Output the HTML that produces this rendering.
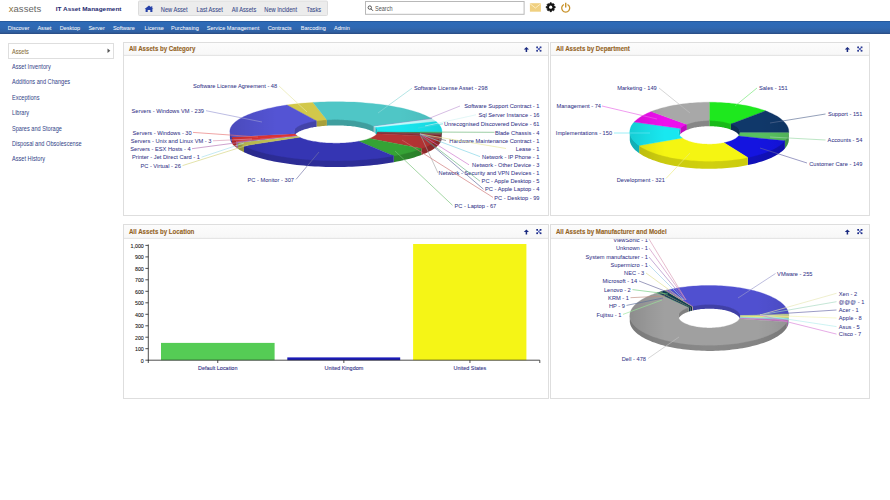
<!DOCTYPE html><html><head><meta charset="utf-8"><style>
html,body{margin:0;padding:0;background:#fff;width:890px;height:500px;overflow:hidden}
svg{display:block}
text{font-family:"Liberation Sans",sans-serif}
</style></head><body>
<svg width="890" height="500" viewBox="0 0 890 500">
<defs>
<linearGradient id="nav" x1="0" y1="0" x2="0" y2="1">
<stop offset="0" stop-color="#24508c"/><stop offset="0.1" stop-color="#2d6bb8"/><stop offset="0.5" stop-color="#2f68b2"/><stop offset="0.85" stop-color="#3060a2"/><stop offset="1" stop-color="#2a4a80"/>
</linearGradient>
<linearGradient id="hdr" x1="0" y1="0" x2="0" y2="1">
<stop offset="0" stop-color="#fcfcfc"/><stop offset="1" stop-color="#f7f7f7"/>
</linearGradient>
<linearGradient id="shG" x1="0" y1="0" x2="1" y2="0">
<stop offset="0" stop-color="#000" stop-opacity="0.12"/><stop offset="0.12" stop-color="#000" stop-opacity="0.05"/><stop offset="0.22" stop-color="#000" stop-opacity="0"/><stop offset="0.8" stop-color="#000" stop-opacity="0"/><stop offset="0.9" stop-color="#000" stop-opacity="0.03"/><stop offset="1" stop-color="#000" stop-opacity="0.08"/>
</linearGradient>
<linearGradient id="shG2" x1="0" y1="0" x2="1" y2="0">
<stop offset="0" stop-color="#000" stop-opacity="0.12"/><stop offset="0.2" stop-color="#000" stop-opacity="0.03"/><stop offset="0.5" stop-color="#000" stop-opacity="0"/><stop offset="0.8" stop-color="#000" stop-opacity="0.03"/><stop offset="1" stop-color="#000" stop-opacity="0.12"/>
</linearGradient>
</defs>

<text x="8.7" y="11.7" font-size="9.5" fill="#666" letter-spacing="0.05"><tspan fill="#8c7438">x</tspan>assets</text>
<text transform="translate(55.80,11.00) scale(1.07,1)" font-size="6.0" font-weight="bold" fill="#1e2a70" text-anchor="start" >IT Asset Management</text>
<rect x="138.5" y="1.0" width="189" height="14.5" rx="1" fill="#ececec" stroke="#dcdcdc" stroke-width="1"/>
<path d="M149,5.6 L151.2,7.3 L151.2,6.2 L152.3,6.2 L152.3,8.2 L153.4,9.1 L152.4,9.1 L152.4,11.9 L150.3,11.9 L150.3,10.0 L147.7,10.0 L147.7,11.9 L145.6,11.9 L145.6,9.1 L144.6,9.1 Z" fill="#2540a8"/>
<text transform="translate(160.80,11.80) scale(0.9,1)" font-size="6.3" font-weight="normal" fill="#3a4a8a" text-anchor="start" stroke="#3a4a8a" stroke-width="0.08" >New Asset</text>
<text transform="translate(196.60,11.80) scale(0.9,1)" font-size="6.3" font-weight="normal" fill="#3a4a8a" text-anchor="start" stroke="#3a4a8a" stroke-width="0.08" >Last Asset</text>
<text transform="translate(231.70,11.80) scale(0.9,1)" font-size="6.3" font-weight="normal" fill="#3a4a8a" text-anchor="start" stroke="#3a4a8a" stroke-width="0.08" >All Assets</text>
<text transform="translate(264.30,11.80) scale(0.9,1)" font-size="6.3" font-weight="normal" fill="#3a4a8a" text-anchor="start" stroke="#3a4a8a" stroke-width="0.08" >New Incident</text>
<text transform="translate(306.60,11.80) scale(0.9,1)" font-size="6.3" font-weight="normal" fill="#3a4a8a" text-anchor="start" stroke="#3a4a8a" stroke-width="0.08" >Tasks</text>
<rect x="365.5" y="1.5" width="158.6" height="12.8" fill="#fff" stroke="#b8b8b8" stroke-width="1"/>
<circle cx="369.8" cy="7.6" r="1.7" fill="none" stroke="#444" stroke-width="0.9"/><path d="M371,8.8 L373,10.8" stroke="#444" stroke-width="1"/>
<text transform="translate(375.00,10.80) scale(0.88,1)" font-size="6.3" font-weight="normal" fill="#555" text-anchor="start" >Search</text>
<rect x="529.9" y="3.2" width="11" height="8.5" fill="#f0d080"/><path d="M529.9,3.6 L535.4,8 L540.9,3.6" fill="none" stroke="#fff3d0" stroke-width="0.8"/>
<path d="M555.2,6.6 555.2,7.8 553.8,8.2 554.3,9.9 553.4,10.8 552.2,10.1 551.3,11.7 550.1,11.7 549.7,10.3 548.0,10.8 547.1,9.9 547.8,8.7 546.2,7.8 546.2,6.6 547.6,6.2 547.1,4.5 548.0,3.6 549.2,4.3 550.1,2.7 551.3,2.7 551.7,4.1 553.4,3.6 554.3,4.5 553.6,5.7 555.2,6.6 555.2,7.8 553.8,8.2 554.3,9.9 553.4,10.8 552.2,10.1 551.3,11.7 550.1,11.7 549.7,10.3 548.0,10.8 547.1,9.9 547.8,8.7 546.2,7.8 546.2,6.6 547.6,6.2 547.1,4.5 548.0,3.6 549.2,4.3 550.1,2.7 551.3,2.7 551.7,4.1 553.4,3.6 554.3,4.5 553.6,5.7Z" fill="#111" stroke="#111" stroke-width="0.4" stroke-linejoin="round"/><circle cx="550.7" cy="7.2" r="1.6" fill="#fff"/>
<path d="M563.9,4.5 A4,4 0 1 0 567.5,4.5" fill="none" stroke="#c8922a" stroke-width="1.3"/><path d="M565.7,2.8 L565.7,7.6" stroke="#c8922a" stroke-width="1.4"/>
<rect x="0" y="21" width="890" height="13" fill="url(#nav)"/>
<text transform="translate(7.70,29.90) scale(0.9,1)" font-size="6.2" font-weight="normal" fill="#f4f7fc" text-anchor="start" stroke="#f4f7fc" stroke-width="0.04" >Discover</text>
<text transform="translate(37.40,29.90) scale(0.9,1)" font-size="6.2" font-weight="normal" fill="#f4f7fc" text-anchor="start" stroke="#f4f7fc" stroke-width="0.04" >Asset</text>
<text transform="translate(59.70,29.90) scale(0.9,1)" font-size="6.2" font-weight="normal" fill="#f4f7fc" text-anchor="start" stroke="#f4f7fc" stroke-width="0.04" >Desktop</text>
<text transform="translate(88.40,29.90) scale(0.9,1)" font-size="6.2" font-weight="normal" fill="#f4f7fc" text-anchor="start" stroke="#f4f7fc" stroke-width="0.04" >Server</text>
<text transform="translate(112.90,29.90) scale(0.9,1)" font-size="6.2" font-weight="normal" fill="#f4f7fc" text-anchor="start" stroke="#f4f7fc" stroke-width="0.04" >Software</text>
<text transform="translate(144.60,29.90) scale(0.9,1)" font-size="6.2" font-weight="normal" fill="#f4f7fc" text-anchor="start" stroke="#f4f7fc" stroke-width="0.04" >License</text>
<text transform="translate(171.00,29.90) scale(0.9,1)" font-size="6.2" font-weight="normal" fill="#f4f7fc" text-anchor="start" stroke="#f4f7fc" stroke-width="0.04" >Purchasing</text>
<text transform="translate(206.70,29.90) scale(0.9,1)" font-size="6.2" font-weight="normal" fill="#f4f7fc" text-anchor="start" stroke="#f4f7fc" stroke-width="0.04" >Service Management</text>
<text transform="translate(267.80,29.90) scale(0.9,1)" font-size="6.2" font-weight="normal" fill="#f4f7fc" text-anchor="start" stroke="#f4f7fc" stroke-width="0.04" >Contracts</text>
<text transform="translate(300.70,29.90) scale(0.9,1)" font-size="6.2" font-weight="normal" fill="#f4f7fc" text-anchor="start" stroke="#f4f7fc" stroke-width="0.04" >Barcoding</text>
<text transform="translate(334.00,29.90) scale(0.9,1)" font-size="6.2" font-weight="normal" fill="#f4f7fc" text-anchor="start" stroke="#f4f7fc" stroke-width="0.04" >Admin</text>
<rect x="8.5" y="43.5" width="105" height="15" fill="#fff" stroke="#dedede" stroke-width="1"/>
<text transform="translate(12.00,53.70) scale(0.88,1)" font-size="6.4" font-weight="normal" fill="#8a7040" text-anchor="start" stroke="#8a7040" stroke-width="0.08" >Assets</text>
<path d="M107.5,48.6 L110.3,50.8 L107.5,53 Z" fill="#555"/>
<text transform="translate(12.00,69.00) scale(0.88,1)" font-size="6.4" font-weight="normal" fill="#334488" text-anchor="start" >Asset Inventory</text>
<text transform="translate(12.00,84.40) scale(0.88,1)" font-size="6.4" font-weight="normal" fill="#334488" text-anchor="start" >Additions and Changes</text>
<text transform="translate(12.00,99.90) scale(0.88,1)" font-size="6.4" font-weight="normal" fill="#334488" text-anchor="start" >Exceptions</text>
<text transform="translate(12.00,115.30) scale(0.88,1)" font-size="6.4" font-weight="normal" fill="#334488" text-anchor="start" >Library</text>
<text transform="translate(12.00,130.60) scale(0.88,1)" font-size="6.4" font-weight="normal" fill="#334488" text-anchor="start" >Spares and Storage</text>
<text transform="translate(12.00,145.90) scale(0.88,1)" font-size="6.4" font-weight="normal" fill="#334488" text-anchor="start" >Disposal and Obsolescense</text>
<text transform="translate(12.00,161.30) scale(0.88,1)" font-size="6.4" font-weight="normal" fill="#334488" text-anchor="start" >Asset History</text>
<rect x="123.5" y="42.5" width="425" height="173" fill="#fff" stroke="#dedede" stroke-width="1"/>
<rect x="550.5" y="42.5" width="319" height="173" fill="#fff" stroke="#dedede" stroke-width="1"/>
<rect x="123.5" y="224.5" width="425" height="174" fill="#fff" stroke="#dedede" stroke-width="1"/>
<rect x="550.5" y="224.5" width="319" height="174" fill="#fff" stroke="#dedede" stroke-width="1"/>
<path d="M441.9,130.0 441.8,131.4 441.8,138.9 441.9,137.5Z" fill="#14c3ca" /><path d="M441.8,131.4 441.6,132.3 441.6,139.8 441.8,138.9Z" fill="#236723" /><path d="M441.6,132.3 441.5,132.5 441.5,140.0 441.6,139.8Z" fill="#443636" /><path d="M441.5,132.5 441.4,132.7 441.4,140.2 441.5,140.0Z" fill="#887a44" /><path d="M441.4,132.7 441.4,133.0 441.4,140.5 441.4,140.2Z" fill="#5f445f" /><path d="M441.4,133.0 441.1,133.6 441.1,141.1 441.4,140.5Z" fill="#6c2844" /><path d="M441.1,133.6 441.0,133.9 441.0,141.4 441.1,141.1Z" fill="#6c4444" /><path d="M441.0,133.9 440.4,135.0 440.4,142.5 441.0,141.4Z" fill="#752323" /><path d="M440.4,135.0 439.8,135.9 439.8,143.4 440.4,142.5Z" fill="#5f222f" /><path d="M439.8,135.9 438.9,136.9 438.0,137.9 436.9,139.0 435.7,140.0 434.3,140.9 432.9,141.9 431.2,142.9 429.5,143.8 427.7,144.8 425.7,145.7 423.6,146.6 421.4,147.4 421.4,154.9 423.6,154.1 425.7,153.2 427.7,152.3 429.5,151.3 431.2,150.4 432.9,149.4 434.3,148.4 435.7,147.5 436.9,146.5 438.0,145.4 438.9,144.4 439.8,143.4Z" fill="#9a2c2c" /><path d="M421.4,147.4 419.1,148.3 416.7,149.1 414.2,149.9 411.5,150.7 408.8,151.4 406.0,152.1 403.1,152.8 400.0,153.5 397.0,154.1 393.8,154.7 393.8,162.2 397.0,161.6 400.0,161.0 403.1,160.3 406.0,159.6 408.8,158.9 411.5,158.2 414.2,157.4 416.7,156.6 419.1,155.8 421.4,154.9Z" fill="#2d8a2d" /><path d="M393.8,154.7 390.6,155.3 387.4,155.8 384.1,156.3 380.7,156.7 377.3,157.2 373.8,157.6 370.3,157.9 366.7,158.2 363.1,158.5 359.5,158.8 355.8,159.0 352.1,159.2 348.4,159.3 344.6,159.4 340.9,159.5 337.2,159.5 333.4,159.5 329.7,159.4 325.9,159.4 322.2,159.3 318.5,159.1 314.8,158.9 311.2,158.7 307.5,158.4 303.9,158.1 300.4,157.8 296.9,157.4 293.4,157.0 290.0,156.6 286.7,156.1 283.4,155.6 280.1,155.1 277.0,154.5 273.9,153.9 270.9,153.3 268.0,152.7 265.2,152.0 262.4,151.3 259.8,150.5 257.2,149.8 254.7,149.0 252.4,148.2 250.1,147.3 248.0,146.5 245.9,145.6 244.0,144.7 244.0,152.2 245.9,153.1 248.0,154.0 250.1,154.8 252.4,155.7 254.7,156.5 257.2,157.3 259.8,158.0 262.4,158.8 265.2,159.5 268.0,160.2 270.9,160.8 273.9,161.4 277.0,162.0 280.1,162.6 283.4,163.1 286.7,163.6 290.0,164.1 293.4,164.5 296.9,164.9 300.4,165.3 303.9,165.6 307.5,165.9 311.2,166.2 314.8,166.4 318.5,166.6 322.2,166.8 325.9,166.9 329.7,166.9 333.4,167.0 337.2,167.0 340.9,167.0 344.6,166.9 348.4,166.8 352.1,166.7 355.8,166.5 359.5,166.3 363.1,166.0 366.7,165.7 370.3,165.4 373.8,165.1 377.3,164.7 380.7,164.2 384.1,163.8 387.4,163.3 390.6,162.8 393.8,162.2Z" fill="#2d2d98" /><path d="M244.0,144.7 241.8,143.6 239.7,142.4 237.9,141.2 237.9,148.7 239.7,149.9 241.8,151.1 244.0,152.2Z" fill="#a4a447" /><path d="M237.9,141.2 237.7,141.1 237.7,148.6 237.9,148.7Z" fill="#88becc" /><path d="M237.7,141.1 236.9,140.5 236.9,148.0 237.7,148.6Z" fill="#884488" /><path d="M236.9,140.5 236.3,140.1 236.3,147.6 236.9,148.0Z" fill="#b0516c" /><path d="M236.3,140.1 235.0,139.0 233.8,138.0 232.8,136.9 232.0,135.8 232.0,143.3 232.8,144.4 233.8,145.5 235.0,146.5 236.3,147.6Z" fill="#be2c2c" /><path d="M232.0,135.8 231.2,134.6 230.6,133.5 230.2,132.3 230.0,131.2 229.9,130.0 229.9,137.5 230.0,138.7 230.2,139.8 230.6,141.0 231.2,142.1 232.0,143.3Z" fill="#4747b4" /><path d="M441.9,131.2 441.8,132.2 441.6,133.3 441.3,134.3 440.9,135.3 440.3,136.3 439.6,137.3 438.8,138.3 437.8,139.3 436.7,140.3 435.5,141.3 434.2,142.3 432.7,143.2 431.2,144.1 429.5,145.0 427.7,145.9 425.8,146.8 423.8,147.7 421.7,148.5 419.4,149.4 417.1,150.2 414.7,150.9 412.2,151.7 409.5,152.4 406.8,153.1 404.0,153.8 401.2,154.4 398.2,155.1 395.2,155.7 392.1,156.2 388.9,156.7 385.7,157.2 382.4,157.7 379.0,158.1 375.6,158.6 372.2,158.9 368.7,159.3 365.1,159.6 361.5,159.8 357.9,160.1 354.3,160.3 350.7,160.4 347.0,160.5 343.3,160.6 339.6,160.7 335.9,160.7 332.2,160.7 328.5,160.6 324.8,160.5 321.1,160.4 317.5,160.3 313.9,160.1 310.3,159.8 306.7,159.6 303.1,159.3 299.6,158.9 296.2,158.6 292.8,158.1 289.4,157.7 286.1,157.2 282.9,156.7 279.7,156.2 276.6,155.7 273.6,155.1 270.6,154.4 267.8,153.8 265.0,153.1 262.3,152.4 259.6,151.7 257.1,150.9 254.7,150.2 252.4,149.4 250.1,148.5 248.0,147.7 246.0,146.8 244.1,145.9 242.3,145.0 240.6,144.1 239.1,143.2 237.6,142.3 236.3,141.3 235.1,140.3 234.0,139.3 233.0,138.3 232.2,137.3 231.5,136.3 230.9,135.3 230.5,134.3 230.2,133.3 230.0,132.2 229.9,131.2 229.9,137.5 230.0,138.5 230.2,139.6 230.5,140.6 230.9,141.6 231.5,142.6 232.2,143.6 233.0,144.6 234.0,145.6 235.1,146.6 236.3,147.6 237.6,148.6 239.1,149.5 240.6,150.4 242.3,151.3 244.1,152.2 246.0,153.1 248.0,154.0 250.1,154.8 252.4,155.7 254.7,156.5 257.1,157.2 259.6,158.0 262.3,158.7 265.0,159.4 267.8,160.1 270.6,160.7 273.6,161.4 276.6,162.0 279.7,162.5 282.9,163.0 286.1,163.5 289.4,164.0 292.8,164.4 296.2,164.9 299.6,165.2 303.1,165.6 306.7,165.9 310.3,166.1 313.9,166.4 317.5,166.6 321.1,166.7 324.8,166.8 328.5,166.9 332.2,167.0 335.9,167.0 339.6,167.0 343.3,166.9 347.0,166.8 350.7,166.7 354.3,166.6 357.9,166.4 361.5,166.1 365.1,165.9 368.7,165.6 372.2,165.2 375.6,164.9 379.0,164.4 382.4,164.0 385.7,163.5 388.9,163.0 392.1,162.5 395.2,162.0 398.2,161.4 401.2,160.7 404.0,160.1 406.8,159.4 409.5,158.7 412.2,158.0 414.7,157.2 417.1,156.5 419.4,155.7 421.7,154.8 423.8,154.0 425.8,153.1 427.7,152.2 429.5,151.3 431.2,150.4 432.7,149.5 434.2,148.6 435.5,147.6 436.7,146.6 437.8,145.6 438.8,144.6 439.6,143.6 440.3,142.6 440.9,141.6 441.3,140.6 441.6,139.6 441.8,138.5 441.9,137.5Z" fill="url(#shG2)" /><path d="M316.4,119.8 317.8,119.6 319.3,119.4 320.8,119.2 322.3,119.0 323.8,118.9 325.3,118.8 326.9,118.7 326.9,125.7 325.3,125.8 323.8,125.9 322.3,126.0 320.8,126.2 319.3,126.4 317.8,126.6 316.4,126.8Z" fill="#a8a03b" /><path d="M326.9,118.7 328.3,118.6 329.8,118.5 331.3,118.5 332.7,118.4 334.2,118.4 335.7,118.4 337.2,118.4 338.7,118.4 340.2,118.5 341.6,118.5 343.1,118.6 344.6,118.7 346.0,118.8 347.5,118.9 348.9,119.0 350.3,119.1 351.7,119.3 353.0,119.4 354.4,119.6 355.7,119.8 357.0,120.0 358.3,120.2 359.5,120.5 360.7,120.7 361.9,121.0 363.1,121.2 364.2,121.5 365.3,121.8 366.3,122.1 367.3,122.4 368.3,122.7 369.2,123.1 370.1,123.4 370.9,123.7 371.7,124.1 372.4,124.5 373.1,124.8 373.8,125.2 373.8,132.2 373.1,131.8 372.4,131.5 371.7,131.1 370.9,130.7 370.1,130.4 369.2,130.1 368.3,129.7 367.3,129.4 366.3,129.1 365.3,128.8 364.2,128.5 363.1,128.2 361.9,128.0 360.7,127.7 359.5,127.5 358.3,127.2 357.0,127.0 355.7,126.8 354.4,126.6 353.0,126.4 351.7,126.3 350.3,126.1 348.9,126.0 347.5,125.9 346.0,125.8 344.6,125.7 343.1,125.6 341.6,125.5 340.2,125.5 338.7,125.4 337.2,125.4 335.7,125.4 334.2,125.4 332.7,125.4 331.3,125.5 329.8,125.5 328.3,125.6 326.9,125.7Z" fill="#3f9e9e" /><path d="M373.8,125.2 373.9,125.3 373.9,132.3 373.8,132.2Z" fill="#805999" /><path d="M373.9,125.3 374.7,125.8 375.4,126.4 375.4,133.4 374.7,132.8 373.9,132.3Z" fill="#99c8c8" /><path d="M375.4,126.4 375.9,126.8 376.3,127.2 376.7,127.6 377.0,128.0 377.2,128.5 377.4,128.9 377.6,129.3 377.7,129.8 377.7,130.2 377.7,137.2 377.7,136.8 377.6,136.3 377.4,135.9 377.2,135.5 377.0,135.0 376.7,134.6 376.3,134.2 375.9,133.8 375.4,133.4Z" fill="#13b8be" /><path d="M294.1,130.2 294.1,129.8 294.2,129.4 294.3,129.0 294.5,128.5 294.7,128.1 295.0,127.7 295.4,127.3 295.7,126.9 296.2,126.5 296.7,126.1 297.2,125.7 297.8,125.4 298.4,125.0 299.1,124.6 299.8,124.3 300.6,123.9 301.4,123.6 302.2,123.2 303.1,122.9 304.0,122.6 305.0,122.3 306.0,122.0 307.1,121.7 308.1,121.4 309.3,121.1 310.4,120.8 311.6,120.6 312.8,120.4 314.0,120.1 315.3,119.9 316.6,119.7 316.6,126.7 315.3,126.9 314.0,127.1 312.8,127.4 311.6,127.6 310.4,127.8 309.3,128.1 308.1,128.4 307.1,128.7 306.0,129.0 305.0,129.3 304.0,129.6 303.1,129.9 302.2,130.2 301.4,130.6 300.6,130.9 299.8,131.3 299.1,131.6 298.4,132.0 297.8,132.4 297.2,132.7 296.7,133.1 296.2,133.5 295.7,133.9 295.4,134.3 295.0,134.7 294.7,135.1 294.5,135.5 294.3,136.0 294.2,136.4 294.1,136.8 294.1,137.2Z" fill="#4343a9" /><path d="M286.5,105.1 290.1,104.6 293.8,104.1 297.5,103.7 301.3,103.3 305.1,103.0 309.0,102.7 313.0,102.4 326.9,119.9 325.3,120.0 323.8,120.1 322.3,120.2 320.8,120.4 319.3,120.6 317.8,120.8 316.4,121.0Z" fill="#d2c84a" stroke="#d2c84a" stroke-width="0.3"/><path d="M313.0,102.4 316.7,102.2 320.4,102.0 324.1,101.9 327.9,101.8 331.6,101.7 335.4,101.7 339.2,101.7 343.0,101.8 346.7,101.9 350.5,102.0 354.2,102.1 357.9,102.3 361.6,102.6 365.2,102.9 368.8,103.2 372.4,103.5 375.9,103.9 379.4,104.3 382.8,104.7 386.1,105.2 389.4,105.7 392.6,106.3 395.8,106.9 398.9,107.5 401.9,108.1 404.8,108.8 407.6,109.5 410.3,110.2 413.0,110.9 415.5,111.7 418.0,112.5 420.3,113.3 422.5,114.2 424.6,115.1 426.6,116.0 428.5,116.9 430.3,117.8 432.0,118.7 373.8,126.4 373.1,126.0 372.4,125.7 371.7,125.3 370.9,124.9 370.1,124.6 369.2,124.3 368.3,123.9 367.3,123.6 366.3,123.3 365.3,123.0 364.2,122.7 363.1,122.4 361.9,122.2 360.7,121.9 359.5,121.7 358.3,121.4 357.0,121.2 355.7,121.0 354.4,120.8 353.0,120.6 351.7,120.5 350.3,120.3 348.9,120.2 347.5,120.1 346.0,120.0 344.6,119.9 343.1,119.8 341.6,119.7 340.2,119.7 338.7,119.6 337.2,119.6 335.7,119.6 334.2,119.6 332.7,119.6 331.3,119.7 329.8,119.7 328.3,119.8 326.9,119.9Z" fill="#4fc6c6" stroke="#4fc6c6" stroke-width="0.3"/><path d="M432.0,118.7 432.2,118.9 373.9,126.5 373.8,126.4Z" fill="#a070c0" stroke="#a070c0" stroke-width="0.3"/><path d="M432.2,118.9 434.3,120.2 436.1,121.6 375.4,127.6 374.7,127.0 373.9,126.5Z" fill="#c0fafa" stroke="#c0fafa" stroke-width="0.3"/><path d="M436.1,121.6 437.4,122.7 438.5,123.7 439.4,124.8 440.2,125.9 440.8,127.0 441.3,128.1 441.7,129.2 441.9,130.4 441.9,131.5 441.8,132.6 377.7,132.0 377.7,131.5 377.7,131.1 377.6,130.6 377.5,130.2 377.3,129.7 377.0,129.3 376.7,128.9 376.3,128.4 375.9,128.0 375.4,127.6Z" fill="#18e6ee" stroke="#18e6ee" stroke-width="0.3"/><path d="M441.8,132.6 441.6,133.5 377.6,132.3 377.7,132.0Z" fill="#2a7a2a" stroke="#2a7a2a" stroke-width="0.3"/><path d="M441.6,133.5 441.5,133.7 377.5,132.4 377.6,132.3Z" fill="#504040" stroke="#504040" stroke-width="0.3"/><path d="M441.5,133.7 441.4,133.9 377.5,132.5 377.5,132.4Z" fill="#a09050" stroke="#a09050" stroke-width="0.3"/><path d="M441.4,133.9 441.4,134.2 377.5,132.6 377.5,132.5Z" fill="#705070" stroke="#705070" stroke-width="0.3"/><path d="M441.4,134.2 441.1,134.8 377.4,132.9 377.5,132.6Z" fill="#803050" stroke="#803050" stroke-width="0.3"/><path d="M441.1,134.8 441.0,135.1 377.3,132.9 377.4,132.9Z" fill="#805050" stroke="#805050" stroke-width="0.3"/><path d="M441.0,135.1 440.4,136.2 377.1,133.4 377.3,132.9Z" fill="#8a2a2a" stroke="#8a2a2a" stroke-width="0.3"/><path d="M440.4,136.2 439.8,137.1 376.9,133.8 377.1,133.4Z" fill="#702838" stroke="#702838" stroke-width="0.3"/><path d="M439.8,137.1 438.9,138.1 438.0,139.1 436.9,140.2 435.7,141.2 434.3,142.1 432.9,143.1 431.2,144.1 429.5,145.0 427.7,146.0 425.7,146.9 423.6,147.8 421.4,148.6 369.6,138.4 370.5,138.0 371.3,137.7 372.1,137.3 372.8,136.9 373.5,136.6 374.1,136.2 374.7,135.8 375.2,135.4 375.7,135.0 376.2,134.6 376.5,134.2 376.9,133.8Z" fill="#b63434" stroke="#b63434" stroke-width="0.3"/><path d="M421.4,148.6 419.1,149.5 416.7,150.3 414.2,151.1 411.5,151.9 408.8,152.6 406.0,153.3 403.1,154.0 400.0,154.7 397.0,155.3 393.8,155.9 358.7,141.3 360.0,141.0 361.2,140.8 362.4,140.5 363.5,140.3 364.6,140.0 365.7,139.7 366.8,139.4 367.8,139.0 368.7,138.7 369.6,138.4Z" fill="#35a335" stroke="#35a335" stroke-width="0.3"/><path d="M393.8,155.9 390.6,156.5 387.4,157.0 384.1,157.5 380.7,157.9 377.3,158.4 373.8,158.8 370.3,159.1 366.7,159.4 363.1,159.7 359.5,160.0 355.8,160.2 352.1,160.4 348.4,160.5 344.6,160.6 340.9,160.7 337.2,160.7 333.4,160.7 329.7,160.6 325.9,160.6 322.2,160.5 318.5,160.3 314.8,160.1 311.2,159.9 307.5,159.6 303.9,159.3 300.4,159.0 296.9,158.6 293.4,158.2 290.0,157.8 286.7,157.3 283.4,156.8 280.1,156.3 277.0,155.7 273.9,155.1 270.9,154.5 268.0,153.9 265.2,153.2 262.4,152.5 259.8,151.7 257.2,151.0 254.7,150.2 252.4,149.4 250.1,148.5 248.0,147.7 245.9,146.8 244.0,145.9 299.7,137.3 300.4,137.6 301.2,138.0 302.1,138.3 303.0,138.7 303.9,139.0 304.9,139.3 305.9,139.6 306.9,139.9 308.0,140.2 309.1,140.5 310.3,140.7 311.5,141.0 312.7,141.2 313.9,141.4 315.2,141.6 316.5,141.8 317.8,142.0 319.1,142.2 320.5,142.4 321.9,142.5 323.3,142.7 324.7,142.8 326.1,142.9 327.6,143.0 329.0,143.0 330.5,143.1 332.0,143.1 333.4,143.2 334.9,143.2 336.4,143.2 337.9,143.2 339.4,143.2 340.8,143.1 342.3,143.1 343.7,143.0 345.2,142.9 346.6,142.8 348.0,142.7 349.5,142.6 350.8,142.4 352.2,142.3 353.6,142.1 354.9,141.9 356.2,141.7 357.5,141.5 358.7,141.3Z" fill="#3535b3" stroke="#3535b3" stroke-width="0.3"/><path d="M244.0,145.9 241.8,144.8 239.7,143.6 237.9,142.4 297.2,135.9 298.0,136.4 298.8,136.8 299.7,137.3Z" fill="#c2c254" stroke="#c2c254" stroke-width="0.3"/><path d="M237.9,142.4 237.7,142.3 297.2,135.8 297.2,135.9Z" fill="#a0e0f0" stroke="#a0e0f0" stroke-width="0.3"/><path d="M237.7,142.3 236.9,141.7 296.8,135.6 297.2,135.8Z" fill="#a050a0" stroke="#a050a0" stroke-width="0.3"/><path d="M236.9,141.7 236.3,141.3 296.6,135.4 296.8,135.6Z" fill="#d06080" stroke="#d06080" stroke-width="0.3"/><path d="M236.3,141.3 235.0,140.2 233.8,139.2 232.8,138.1 232.0,137.0 294.9,133.7 295.3,134.2 295.7,134.6 296.1,135.0 296.6,135.4Z" fill="#e03434" stroke="#e03434" stroke-width="0.3"/><path d="M232.0,137.0 231.3,135.9 230.7,134.9 230.3,133.9 230.1,132.8 229.9,131.7 229.9,130.7 230.0,129.6 230.3,128.6 230.7,127.5 231.3,126.5 231.9,125.4 232.7,124.4 233.7,123.4 234.7,122.4 235.9,121.4 237.3,120.4 238.7,119.4 240.3,118.5 242.0,117.5 243.8,116.6 245.8,115.7 247.8,114.8 250.0,113.9 252.3,113.1 254.6,112.3 257.1,111.5 259.7,110.7 262.4,109.9 265.2,109.2 268.0,108.5 271.0,107.9 274.0,107.2 277.2,106.6 280.4,106.1 283.6,105.5 287.0,105.0 316.6,120.9 315.3,121.1 314.0,121.3 312.7,121.6 311.5,121.8 310.3,122.1 309.1,122.3 308.0,122.6 306.9,122.9 305.9,123.2 304.8,123.5 303.9,123.8 302.9,124.2 302.0,124.5 301.2,124.8 300.4,125.2 299.6,125.6 298.9,125.9 298.2,126.3 297.6,126.7 297.0,127.1 296.5,127.5 296.0,127.9 295.6,128.3 295.2,128.7 294.9,129.1 294.6,129.5 294.4,129.9 294.3,130.4 294.2,130.8 294.1,131.2 294.1,131.6 294.2,132.0 294.3,132.5 294.4,132.9 294.6,133.3 294.9,133.7Z" fill="#5454d4" stroke="#5454d4" stroke-width="0.3"/><path d="M441.9,131.2 441.8,132.2 441.6,133.3 441.3,134.3 440.9,135.3 440.3,136.3 439.6,137.3 438.8,138.3 437.8,139.3 436.7,140.3 435.5,141.3 434.2,142.3 432.7,143.2 431.2,144.1 429.5,145.0 427.7,145.9 425.8,146.8 423.8,147.7 421.7,148.5 419.4,149.4 417.1,150.2 414.7,150.9 412.2,151.7 409.5,152.4 406.8,153.1 404.0,153.8 401.2,154.4 398.2,155.1 395.2,155.7 392.1,156.2 388.9,156.7 385.7,157.2 382.4,157.7 379.0,158.1 375.6,158.6 372.2,158.9 368.7,159.3 365.1,159.6 361.5,159.8 357.9,160.1 354.3,160.3 350.7,160.4 347.0,160.5 343.3,160.6 339.6,160.7 335.9,160.7 332.2,160.7 328.5,160.6 324.8,160.5 321.1,160.4 317.5,160.3 313.9,160.1 310.3,159.8 306.7,159.6 303.1,159.3 299.6,158.9 296.2,158.6 292.8,158.1 289.4,157.7 286.1,157.2 282.9,156.7 279.7,156.2 276.6,155.7 273.6,155.1 270.6,154.4 267.8,153.8 265.0,153.1 262.3,152.4 259.6,151.7 257.1,150.9 254.7,150.2 252.4,149.4 250.1,148.5 248.0,147.7 246.0,146.8 244.1,145.9 242.3,145.0 240.6,144.1 239.1,143.2 237.6,142.3 236.3,141.3 235.1,140.3 234.0,139.3 233.0,138.3 232.2,137.3 231.5,136.3 230.9,135.3 230.5,134.3 230.2,133.3 230.0,132.2 229.9,131.2 230.0,130.2 230.2,129.1 230.5,128.1 230.9,127.1 231.5,126.1 232.2,125.1 233.0,124.1 234.0,123.1 235.1,122.1 236.3,121.1 237.6,120.1 239.1,119.2 240.6,118.3 242.3,117.4 244.1,116.4 246.0,115.6 248.0,114.7 250.1,113.9 252.4,113.0 254.7,112.2 257.1,111.5 259.6,110.7 262.3,110.0 265.0,109.3 267.8,108.6 270.6,108.0 273.6,107.3 276.6,106.7 279.7,106.2 282.9,105.7 286.1,105.2 289.4,104.7 292.8,104.3 296.2,103.8 299.6,103.5 303.1,103.1 306.7,102.8 310.3,102.6 313.9,102.3 317.5,102.1 321.1,102.0 324.8,101.9 328.5,101.8 332.2,101.7 335.9,101.7 339.6,101.7 343.3,101.8 347.0,101.9 350.7,102.0 354.3,102.1 357.9,102.3 361.5,102.6 365.1,102.8 368.7,103.1 372.2,103.5 375.6,103.8 379.0,104.3 382.4,104.7 385.7,105.2 388.9,105.7 392.1,106.2 395.2,106.7 398.2,107.3 401.2,108.0 404.0,108.6 406.8,109.3 409.5,110.0 412.2,110.7 414.7,111.5 417.1,112.2 419.4,113.0 421.7,113.9 423.8,114.7 425.8,115.6 427.7,116.4 429.5,117.4 431.2,118.3 432.7,119.2 434.2,120.1 435.5,121.1 436.7,122.1 437.8,123.1 438.8,124.1 439.6,125.1 440.3,126.1 440.9,127.1 441.3,128.1 441.6,129.1 441.8,130.2 441.9,131.2Z M377.7,131.4 377.7,131.0 377.6,130.6 377.5,130.2 377.3,129.8 377.1,129.4 376.8,128.9 376.5,128.5 376.1,128.1 375.7,127.8 375.2,127.4 374.7,127.0 374.1,126.6 373.5,126.2 372.8,125.9 372.1,125.5 371.3,125.1 370.6,124.8 369.7,124.5 368.8,124.1 367.9,123.8 367.0,123.5 366.0,123.2 364.9,122.9 363.9,122.6 362.8,122.4 361.6,122.1 360.5,121.9 359.3,121.6 358.1,121.4 356.8,121.2 355.5,121.0 354.2,120.8 352.9,120.6 351.6,120.5 350.2,120.3 348.8,120.2 347.4,120.1 346.0,120.0 344.6,119.9 343.2,119.8 341.7,119.7 340.3,119.7 338.8,119.6 337.4,119.6 335.9,119.6 334.4,119.6 333.0,119.6 331.5,119.7 330.1,119.7 328.6,119.8 327.2,119.9 325.8,120.0 324.4,120.1 323.0,120.2 321.6,120.3 320.2,120.5 318.9,120.6 317.6,120.8 316.3,121.0 315.0,121.2 313.7,121.4 312.5,121.6 311.3,121.9 310.2,122.1 309.0,122.4 307.9,122.6 306.9,122.9 305.8,123.2 304.8,123.5 303.9,123.8 303.0,124.1 302.1,124.5 301.2,124.8 300.5,125.1 299.7,125.5 299.0,125.9 298.3,126.2 297.7,126.6 297.1,127.0 296.6,127.4 296.1,127.8 295.7,128.1 295.3,128.5 295.0,128.9 294.7,129.4 294.5,129.8 294.3,130.2 294.2,130.6 294.1,131.0 294.1,131.4 294.1,131.8 294.2,132.2 294.3,132.6 294.5,133.0 294.7,133.4 295.0,133.9 295.3,134.3 295.7,134.7 296.1,135.0 296.6,135.4 297.1,135.8 297.7,136.2 298.3,136.6 299.0,136.9 299.7,137.3 300.5,137.7 301.2,138.0 302.1,138.3 303.0,138.7 303.9,139.0 304.8,139.3 305.8,139.6 306.9,139.9 307.9,140.2 309.0,140.4 310.2,140.7 311.3,140.9 312.5,141.2 313.7,141.4 315.0,141.6 316.3,141.8 317.6,142.0 318.9,142.2 320.2,142.3 321.6,142.5 323.0,142.6 324.4,142.7 325.8,142.8 327.2,142.9 328.6,143.0 330.1,143.1 331.5,143.1 333.0,143.2 334.4,143.2 335.9,143.2 337.4,143.2 338.8,143.2 340.3,143.1 341.7,143.1 343.2,143.0 344.6,142.9 346.0,142.8 347.4,142.7 348.8,142.6 350.2,142.5 351.6,142.3 352.9,142.2 354.2,142.0 355.5,141.8 356.8,141.6 358.1,141.4 359.3,141.2 360.5,140.9 361.6,140.7 362.8,140.4 363.9,140.2 364.9,139.9 366.0,139.6 367.0,139.3 367.9,139.0 368.8,138.7 369.7,138.3 370.6,138.0 371.3,137.7 372.1,137.3 372.8,136.9 373.5,136.6 374.1,136.2 374.7,135.8 375.2,135.4 375.7,135.0 376.1,134.7 376.5,134.3 376.8,133.9 377.1,133.4 377.3,133.0 377.5,132.6 377.6,132.2 377.7,131.8 377.7,131.4Z" fill="url(#shG)" fill-rule="evenodd"/>
<path d="M279.0,86.0 L307.0,112.0" fill="none" stroke="#e6e6a6" stroke-width="0.65"/>
<text transform="translate(277.20,88.20) scale(0.95,1)" font-size="6.0" font-weight="normal" fill="#333388" text-anchor="end" stroke="#333388" stroke-width="0.04" >Software License Agreement - 48</text>
<path d="M206.0,110.7 L262.0,122.0" fill="none" stroke="#9999d3" stroke-width="0.65"/>
<text transform="translate(204.00,112.90) scale(0.95,1)" font-size="6.0" font-weight="normal" fill="#333388" text-anchor="end" stroke="#333388" stroke-width="0.04" >Servers - Windows VM - 239</text>
<path d="M193.0,132.4 L258.0,137.0" fill="none" stroke="#e67373" stroke-width="0.65"/>
<text transform="translate(191.70,134.60) scale(0.95,1)" font-size="6.0" font-weight="normal" fill="#333388" text-anchor="end" stroke="#333388" stroke-width="0.04" >Servers - Windows - 30</text>
<path d="M213.0,140.8 L252.0,139.0" fill="none" stroke="#d999b3" stroke-width="0.65"/>
<text transform="translate(211.40,143.00) scale(0.95,1)" font-size="6.0" font-weight="normal" fill="#333388" text-anchor="end" stroke="#333388" stroke-width="0.04" >Servers - Unix and Linux VM - 3</text>
<path d="M192.0,148.7 L250.0,141.0" fill="none" stroke="#b373b3" stroke-width="0.65"/>
<text transform="translate(190.70,150.90) scale(0.95,1)" font-size="6.0" font-weight="normal" fill="#333388" text-anchor="end" stroke="#333388" stroke-width="0.04" >Servers - ESX Hosts - 4</text>
<path d="M201.5,157.2 L244.0,143.0" fill="none" stroke="#a6dfec" stroke-width="0.65"/>
<text transform="translate(200.00,159.40) scale(0.95,1)" font-size="6.0" font-weight="normal" fill="#333388" text-anchor="end" stroke="#333388" stroke-width="0.04" >Printer - Jet Direct Card - 1</text>
<path d="M182.5,165.6 L248.0,145.0" fill="none" stroke="#d3d37f" stroke-width="0.65"/>
<text transform="translate(180.80,167.80) scale(0.95,1)" font-size="6.0" font-weight="normal" fill="#333388" text-anchor="end" stroke="#333388" stroke-width="0.04" >PC - Virtual - 26</text>
<path d="M296.0,179.4 L319.0,152.0" fill="none" stroke="#7373a6" stroke-width="0.65"/>
<text transform="translate(294.00,181.60) scale(0.95,1)" font-size="6.0" font-weight="normal" fill="#333388" text-anchor="end" stroke="#333388" stroke-width="0.04" >PC - Monitor - 307</text>
<path d="M412.0,88.2 L378.0,113.0" fill="none" stroke="#8cd9d9" stroke-width="0.65"/>
<text transform="translate(413.90,90.40) scale(0.95,1)" font-size="6.0" font-weight="normal" fill="#333388" text-anchor="start" stroke="#333388" stroke-width="0.04" >Software License Asset - 298</text>
<path d="M460.0,106.0 L430.0,118.0" fill="none" stroke="#bf99d3" stroke-width="0.65"/>
<text transform="translate(539.50,108.20) scale(0.95,1)" font-size="6.0" font-weight="normal" fill="#333388" text-anchor="end" stroke="#333388" stroke-width="0.04" >Software Support Contract - 1</text>
<path d="M476.0,114.8 L425.0,126.0" fill="none" stroke="#d3f3f3" stroke-width="0.65"/>
<text transform="translate(539.50,117.00) scale(0.95,1)" font-size="6.0" font-weight="normal" fill="#333388" text-anchor="end" stroke="#333388" stroke-width="0.04" >Sql Server Instance - 16</text>
<path d="M443.0,123.8 L418.0,128.0" fill="none" stroke="#4cd9df" stroke-width="0.65"/>
<text transform="translate(539.50,126.00) scale(0.95,1)" font-size="6.0" font-weight="normal" fill="#333388" text-anchor="end" stroke="#333388" stroke-width="0.04" >Unrecognised Discovered Device - 61</text>
<path d="M494.5,132.3 L420.0,132.0" fill="none" stroke="#66b373" stroke-width="0.65"/>
<text transform="translate(539.50,134.50) scale(0.95,1)" font-size="6.0" font-weight="normal" fill="#333388" text-anchor="end" stroke="#333388" stroke-width="0.04" >Blade Chassis - 4</text>
<path d="M446.0,140.5 L420.0,134.0" fill="none" stroke="#7f7f7f" stroke-width="0.65"/>
<text transform="translate(539.50,142.70) scale(0.95,1)" font-size="6.0" font-weight="normal" fill="#333388" text-anchor="end" stroke="#333388" stroke-width="0.04" >Hardware Maintenance Contract - 1</text>
<path d="M506.0,148.5 L420.0,134.0" fill="none" stroke="#e6e699" stroke-width="0.65"/>
<text transform="translate(539.50,150.70) scale(0.95,1)" font-size="6.0" font-weight="normal" fill="#333388" text-anchor="end" stroke="#333388" stroke-width="0.04" >Lease - 1</text>
<path d="M480.0,156.6 L420.0,134.0" fill="none" stroke="#7fd3e6" stroke-width="0.65"/>
<text transform="translate(539.50,158.80) scale(0.95,1)" font-size="6.0" font-weight="normal" fill="#333388" text-anchor="end" stroke="#333388" stroke-width="0.04" >Network - IP Phone - 1</text>
<path d="M469.0,164.8 L420.0,134.0" fill="none" stroke="#cc73cc" stroke-width="0.65"/>
<text transform="translate(539.50,167.00) scale(0.95,1)" font-size="6.0" font-weight="normal" fill="#333388" text-anchor="end" stroke="#333388" stroke-width="0.04" >Network - Other Device - 3</text>
<path d="M438.0,173.0 L420.0,134.0" fill="none" stroke="#a6a6a6" stroke-width="0.65"/>
<text transform="translate(539.50,175.20) scale(0.95,1)" font-size="6.0" font-weight="normal" fill="#333388" text-anchor="end" stroke="#333388" stroke-width="0.04" >Network - Security and VPN Devices - 1</text>
<path d="M480.0,181.2 L420.0,135.0" fill="none" stroke="#66b37f" stroke-width="0.65"/>
<text transform="translate(539.50,183.40) scale(0.95,1)" font-size="6.0" font-weight="normal" fill="#333388" text-anchor="end" stroke="#333388" stroke-width="0.04" >PC - Apple Desktop - 5</text>
<path d="M483.5,189.2 L420.0,135.0" fill="none" stroke="#596699" stroke-width="0.65"/>
<text transform="translate(539.50,191.40) scale(0.95,1)" font-size="6.0" font-weight="normal" fill="#333388" text-anchor="end" stroke="#333388" stroke-width="0.04" >PC - Apple Laptop - 4</text>
<path d="M493.0,197.4 L402.0,140.0" fill="none" stroke="#cc7373" stroke-width="0.65"/>
<text transform="translate(539.50,199.60) scale(0.95,1)" font-size="6.0" font-weight="normal" fill="#333388" text-anchor="end" stroke="#333388" stroke-width="0.04" >PC - Desktop - 99</text>
<path d="M452.5,205.3 L395.0,151.0" fill="none" stroke="#73bf73" stroke-width="0.65"/>
<text transform="translate(496.30,207.50) scale(0.95,1)" font-size="6.0" font-weight="normal" fill="#333388" text-anchor="end" stroke="#333388" stroke-width="0.04" >PC - Laptop - 67</text>
<path d="M788.8,130.5 788.8,131.5 788.8,140.3 788.8,139.3Z" fill="#0d2f5a" /><path d="M788.8,131.5 788.6,132.6 788.4,133.6 788.0,134.6 787.6,135.6 787.1,136.6 786.4,137.6 785.7,138.6 784.9,139.6 784.9,148.4 785.7,147.4 786.4,146.4 787.1,145.4 787.6,144.4 788.0,143.4 788.4,142.4 788.6,141.4 788.8,140.3Z" fill="#4aa351" /><path d="M784.9,139.6 784.0,140.6 783.0,141.6 781.8,142.6 780.6,143.5 779.3,144.5 778.0,145.4 776.5,146.3 774.9,147.2 773.3,148.0 771.5,148.9 769.7,149.7 767.8,150.5 765.9,151.2 763.9,152.0 761.8,152.7 759.6,153.3 757.4,154.0 755.1,154.6 752.7,155.2 750.3,155.8 747.8,156.3 747.8,165.1 750.3,164.6 752.7,164.0 755.1,163.4 757.4,162.8 759.6,162.1 761.8,161.5 763.9,160.8 765.9,160.0 767.8,159.3 769.7,158.5 771.5,157.7 773.3,156.8 774.9,156.0 776.5,155.1 778.0,154.2 779.3,153.3 780.6,152.3 781.8,151.4 783.0,150.4 784.0,149.4 784.9,148.4Z" fill="#1111be" /><path d="M747.8,156.3 745.4,156.8 742.9,157.2 740.3,157.7 737.7,158.1 735.1,158.4 732.4,158.7 729.7,159.0 727.0,159.3 724.2,159.5 721.5,159.7 718.7,159.8 715.9,159.9 713.1,160.0 710.3,160.0 707.5,160.0 704.7,160.0 701.9,159.9 699.1,159.8 696.3,159.6 693.6,159.4 690.9,159.2 688.1,158.9 685.5,158.6 682.8,158.3 680.2,157.9 677.6,157.5 675.0,157.1 672.5,156.7 670.1,156.2 667.6,155.6 665.3,155.1 663.0,154.5 660.7,153.9 658.5,153.2 656.4,152.5 654.4,151.8 652.4,151.1 650.4,150.3 648.6,149.6 646.8,148.7 645.1,147.9 643.5,147.1 642.0,146.2 640.5,145.3 639.2,144.4 639.2,153.2 640.5,154.1 642.0,155.0 643.5,155.9 645.1,156.7 646.8,157.5 648.6,158.4 650.4,159.1 652.4,159.9 654.4,160.6 656.4,161.3 658.5,162.0 660.7,162.7 663.0,163.3 665.3,163.9 667.6,164.4 670.1,165.0 672.5,165.5 675.0,165.9 677.6,166.3 680.2,166.7 682.8,167.1 685.5,167.4 688.1,167.7 690.9,168.0 693.6,168.2 696.3,168.4 699.1,168.6 701.9,168.7 704.7,168.8 707.5,168.8 710.3,168.8 713.1,168.8 715.9,168.7 718.7,168.6 721.5,168.5 724.2,168.3 727.0,168.1 729.7,167.8 732.4,167.5 735.1,167.2 737.7,166.9 740.3,166.5 742.9,166.0 745.4,165.6 747.8,165.1Z" fill="#d0d00f" /><path d="M639.2,144.4 637.9,143.5 636.7,142.5 635.6,141.6 634.6,140.6 633.7,139.6 632.9,138.7 632.2,137.7 631.6,136.7 631.0,135.6 630.6,134.6 630.2,133.6 630.0,132.6 629.8,131.5 629.8,130.5 629.8,139.3 629.8,140.3 630.0,141.4 630.2,142.4 630.6,143.4 631.0,144.4 631.6,145.5 632.2,146.5 632.9,147.5 633.7,148.4 634.6,149.4 635.6,150.4 636.7,151.3 637.9,152.3 639.2,153.2Z" fill="#14c5cc" /><path d="M788.8,131.7 788.8,132.7 788.6,133.8 788.4,134.8 788.0,135.8 787.6,136.8 787.1,137.8 786.4,138.8 785.7,139.8 784.9,140.8 784.0,141.8 783.0,142.8 781.9,143.7 780.8,144.6 779.5,145.5 778.1,146.4 776.7,147.3 775.2,148.2 773.6,149.0 771.9,149.9 770.2,150.7 768.4,151.4 766.5,152.2 764.5,152.9 762.5,153.6 760.4,154.3 758.2,154.9 756.0,155.6 753.8,156.2 751.4,156.7 749.0,157.2 746.6,157.7 744.2,158.2 741.6,158.6 739.1,159.1 736.5,159.4 733.9,159.8 731.2,160.1 728.5,160.3 725.8,160.6 723.1,160.8 720.4,160.9 717.6,161.0 714.8,161.1 712.1,161.2 709.3,161.2 706.5,161.2 703.8,161.1 701.0,161.0 698.2,160.9 695.5,160.8 692.8,160.6 690.1,160.3 687.4,160.1 684.7,159.8 682.1,159.4 679.5,159.1 677.0,158.6 674.4,158.2 672.0,157.7 669.5,157.2 667.2,156.7 664.8,156.2 662.6,155.6 660.4,154.9 658.2,154.3 656.1,153.6 654.1,152.9 652.1,152.2 650.2,151.4 648.4,150.7 646.7,149.9 645.0,149.0 643.4,148.2 641.9,147.3 640.5,146.4 639.1,145.5 637.8,144.6 636.7,143.7 635.6,142.8 634.6,141.8 633.7,140.8 632.9,139.8 632.2,138.8 631.5,137.8 631.0,136.8 630.6,135.8 630.2,134.8 630.0,133.8 629.8,132.7 629.8,131.7 629.8,139.3 629.8,140.3 630.0,141.4 630.2,142.4 630.6,143.4 631.0,144.4 631.5,145.4 632.2,146.4 632.9,147.4 633.7,148.4 634.6,149.4 635.6,150.4 636.7,151.3 637.8,152.2 639.1,153.1 640.5,154.0 641.9,154.9 643.4,155.8 645.0,156.6 646.7,157.5 648.4,158.3 650.2,159.0 652.1,159.8 654.1,160.5 656.1,161.2 658.2,161.9 660.4,162.5 662.6,163.2 664.8,163.8 667.2,164.3 669.5,164.8 672.0,165.3 674.4,165.8 677.0,166.2 679.5,166.7 682.1,167.0 684.7,167.4 687.4,167.7 690.1,167.9 692.8,168.2 695.5,168.4 698.2,168.5 701.0,168.6 703.8,168.7 706.5,168.8 709.3,168.8 712.1,168.8 714.8,168.7 717.6,168.6 720.4,168.5 723.1,168.4 725.8,168.2 728.5,167.9 731.2,167.7 733.9,167.4 736.5,167.0 739.1,166.7 741.6,166.2 744.2,165.8 746.6,165.3 749.0,164.8 751.4,164.3 753.8,163.8 756.0,163.2 758.2,162.5 760.4,161.9 762.5,161.2 764.5,160.5 766.5,159.8 768.4,159.0 770.2,158.3 771.9,157.5 773.6,156.6 775.2,155.8 776.7,154.9 778.1,154.0 779.5,153.1 780.8,152.2 781.9,151.3 783.0,150.4 784.0,149.4 784.9,148.4 785.7,147.4 786.4,146.4 787.1,145.4 787.6,144.4 788.0,143.4 788.4,142.4 788.6,141.4 788.8,140.3 788.8,139.3Z" fill="url(#shG2)" /><path d="M709.3,119.4 710.4,119.4 711.5,119.4 712.6,119.5 713.7,119.5 714.7,119.6 715.8,119.7 716.9,119.8 717.9,119.9 719.0,120.0 720.0,120.1 721.0,120.3 722.0,120.5 723.0,120.6 724.0,120.8 724.9,121.1 725.8,121.3 726.8,121.5 727.6,121.8 728.5,122.0 729.3,122.3 730.2,122.6 730.9,122.9 730.9,129.7 730.2,129.4 729.3,129.1 728.5,128.8 727.6,128.6 726.8,128.3 725.8,128.1 724.9,127.9 724.0,127.6 723.0,127.4 722.0,127.3 721.0,127.1 720.0,126.9 719.0,126.8 717.9,126.7 716.9,126.6 715.8,126.5 714.7,126.4 713.7,126.3 712.6,126.3 711.5,126.2 710.4,126.2 709.3,126.2Z" fill="#18b918" /><path d="M730.9,122.9 731.7,123.2 732.4,123.5 733.1,123.8 733.8,124.1 734.4,124.5 735.0,124.8 735.6,125.2 736.2,125.5 736.7,125.9 737.1,126.3 737.6,126.7 738.0,127.1 738.3,127.5 738.7,127.9 738.9,128.3 739.2,128.7 739.4,129.1 739.6,129.5 739.7,129.9 739.8,130.4 739.9,130.8 739.9,131.2 739.9,138.0 739.9,137.6 739.8,137.2 739.7,136.7 739.6,136.3 739.4,135.9 739.2,135.5 738.9,135.1 738.7,134.7 738.3,134.3 738.0,133.9 737.6,133.5 737.1,133.1 736.7,132.7 736.2,132.3 735.6,132.0 735.0,131.6 734.4,131.3 733.8,130.9 733.1,130.6 732.4,130.3 731.7,130.0 730.9,129.7Z" fill="#0c2c54" /><path d="M678.7,131.2 678.7,130.8 678.8,130.3 678.9,129.9 679.0,129.5 679.2,129.0 679.5,128.6 679.7,128.2 680.0,127.8 680.4,127.3 680.4,134.1 680.0,134.6 679.7,135.0 679.5,135.4 679.2,135.8 679.0,136.3 678.9,136.7 678.8,137.1 678.7,137.6 678.7,138.0Z" fill="#13b9c0" /><path d="M680.4,127.3 680.8,126.9 681.2,126.5 681.7,126.1 682.2,125.7 682.8,125.3 683.4,124.9 684.0,124.6 684.7,124.2 685.4,123.8 686.1,123.5 686.9,123.2 686.9,130.0 686.1,130.3 685.4,130.6 684.7,131.0 684.0,131.4 683.4,131.7 682.8,132.1 682.2,132.5 681.7,132.9 681.2,133.3 680.8,133.7 680.4,134.1Z" fill="#be0cbe" /><path d="M686.9,123.2 687.7,122.9 688.5,122.6 689.3,122.3 690.1,122.0 691.0,121.7 691.9,121.5 692.8,121.3 693.7,121.0 694.6,120.8 695.6,120.6 696.6,120.5 697.6,120.3 698.6,120.1 699.6,120.0 700.7,119.9 701.7,119.8 702.8,119.7 703.9,119.6 704.9,119.5 706.0,119.5 707.1,119.4 708.2,119.4 709.3,119.4 709.3,126.2 708.2,126.2 707.1,126.2 706.0,126.3 704.9,126.3 703.9,126.4 702.8,126.5 701.7,126.6 700.7,126.7 699.6,126.8 698.6,126.9 697.6,127.1 696.6,127.3 695.6,127.4 694.6,127.6 693.7,127.8 692.8,128.1 691.9,128.3 691.0,128.5 690.1,128.8 689.3,129.1 688.5,129.4 687.7,129.7 686.9,130.0Z" fill="#868686" /><path d="M709.3,102.2 712.1,102.2 715.0,102.3 717.8,102.4 720.6,102.5 723.4,102.7 726.2,102.9 729.0,103.1 731.7,103.4 734.4,103.7 737.1,104.1 739.7,104.4 742.3,104.9 744.9,105.3 747.4,105.8 749.9,106.3 752.3,106.9 754.6,107.5 756.9,108.1 759.2,108.7 761.4,109.4 763.5,110.1 765.5,110.8 730.9,124.1 730.2,123.8 729.3,123.5 728.5,123.2 727.6,123.0 726.8,122.7 725.8,122.5 724.9,122.3 724.0,122.0 723.0,121.8 722.0,121.7 721.0,121.5 720.0,121.3 719.0,121.2 717.9,121.1 716.9,121.0 715.8,120.9 714.7,120.8 713.7,120.7 712.6,120.7 711.5,120.6 710.4,120.6 709.3,120.6Z" fill="#1ee81e" stroke="#1ee81e" stroke-width="0.3"/><path d="M765.5,110.8 767.5,111.6 769.4,112.4 771.2,113.2 772.9,114.0 774.6,114.9 776.2,115.7 777.7,116.6 779.1,117.6 780.4,118.5 781.6,119.4 782.7,120.4 783.8,121.4 784.7,122.4 785.6,123.4 786.3,124.4 787.0,125.4 787.5,126.4 788.0,127.5 788.3,128.5 788.6,129.6 788.7,130.6 788.8,131.7 788.8,132.7 739.9,132.8 739.9,132.4 739.9,132.0 739.8,131.5 739.7,131.1 739.6,130.7 739.4,130.3 739.2,129.9 738.9,129.5 738.7,129.1 738.3,128.7 738.0,128.3 737.6,127.9 737.1,127.5 736.7,127.1 736.2,126.7 735.6,126.4 735.0,126.0 734.4,125.7 733.8,125.3 733.1,125.0 732.4,124.7 731.7,124.4 730.9,124.1Z" fill="#10386a" stroke="#10386a" stroke-width="0.3"/><path d="M788.8,132.7 788.6,133.8 788.4,134.8 788.0,135.8 787.6,136.8 787.1,137.8 786.4,138.8 785.7,139.8 784.9,140.8 738.4,136.0 738.7,135.7 739.0,135.3 739.2,134.9 739.4,134.4 739.6,134.0 739.7,133.6 739.8,133.2 739.9,132.8Z" fill="#58c060" stroke="#58c060" stroke-width="0.3"/><path d="M784.9,140.8 784.0,141.8 783.0,142.8 781.8,143.8 780.6,144.7 779.3,145.7 778.0,146.6 776.5,147.5 774.9,148.4 773.3,149.2 771.5,150.1 769.7,150.9 767.8,151.7 765.9,152.4 763.9,153.2 761.8,153.9 759.6,154.5 757.4,155.2 755.1,155.8 752.7,156.4 750.3,157.0 747.8,157.5 724.1,142.7 725.1,142.5 726.0,142.3 726.9,142.0 727.8,141.8 728.7,141.5 729.5,141.3 730.3,141.0 731.1,140.7 731.8,140.4 732.6,140.1 733.3,139.7 733.9,139.4 734.6,139.1 735.2,138.7 735.7,138.4 736.3,138.0 736.8,137.6 737.2,137.2 737.7,136.8 738.0,136.4 738.4,136.0Z" fill="#1414e0" stroke="#1414e0" stroke-width="0.3"/><path d="M747.8,157.5 745.4,158.0 742.9,158.4 740.3,158.9 737.7,159.3 735.1,159.6 732.4,159.9 729.7,160.2 727.0,160.5 724.2,160.7 721.5,160.9 718.7,161.0 715.9,161.1 713.1,161.2 710.3,161.2 707.5,161.2 704.7,161.2 701.9,161.1 699.1,161.0 696.3,160.8 693.6,160.6 690.9,160.4 688.1,160.1 685.5,159.8 682.8,159.5 680.2,159.1 677.6,158.7 675.0,158.3 672.5,157.9 670.1,157.4 667.6,156.8 665.3,156.3 663.0,155.7 660.7,155.1 658.5,154.4 656.4,153.7 654.4,153.0 652.4,152.3 650.4,151.5 648.6,150.8 646.8,149.9 645.1,149.1 643.5,148.3 642.0,147.4 640.5,146.5 639.2,145.6 682.3,138.0 682.8,138.3 683.4,138.7 684.0,139.0 684.6,139.4 685.3,139.7 685.9,140.0 686.6,140.3 687.4,140.6 688.2,140.9 688.9,141.2 689.8,141.5 690.6,141.7 691.5,142.0 692.4,142.2 693.3,142.5 694.2,142.7 695.1,142.9 696.1,143.0 697.1,143.2 698.1,143.4 699.1,143.5 700.1,143.7 701.2,143.8 702.2,143.9 703.3,144.0 704.3,144.0 705.4,144.1 706.5,144.1 707.5,144.2 708.6,144.2 709.7,144.2 710.8,144.2 711.8,144.2 712.9,144.1 714.0,144.1 715.0,144.0 716.1,143.9 717.1,143.8 718.2,143.7 719.2,143.6 720.2,143.4 721.2,143.3 722.2,143.1 723.2,142.9 724.1,142.7Z" fill="#f5f512" stroke="#f5f512" stroke-width="0.3"/><path d="M639.2,145.6 637.9,144.7 636.7,143.7 635.6,142.7 634.5,141.7 633.6,140.7 632.8,139.7 632.1,138.7 631.4,137.7 630.9,136.6 630.5,135.6 630.2,134.5 629.9,133.5 629.8,132.4 629.8,131.4 629.9,130.3 630.1,129.3 630.4,128.2 630.7,127.2 631.2,126.1 631.8,125.1 632.5,124.1 633.3,123.1 634.2,122.1 680.4,128.5 680.0,128.9 679.7,129.3 679.5,129.8 679.3,130.2 679.1,130.6 678.9,131.0 678.8,131.4 678.7,131.8 678.7,132.3 678.7,132.7 678.8,133.1 678.8,133.5 679.0,134.0 679.1,134.4 679.3,134.8 679.6,135.2 679.9,135.6 680.2,136.0 680.5,136.4 680.9,136.8 681.3,137.2 681.8,137.6 682.3,138.0Z" fill="#18e8f0" stroke="#18e8f0" stroke-width="0.3"/><path d="M634.2,122.1 635.2,121.0 636.4,120.0 637.6,118.9 639.0,117.9 640.4,117.0 642.0,116.0 643.6,115.1 645.4,114.2 647.2,113.3 649.1,112.4 651.1,111.6 686.9,124.4 686.1,124.7 685.4,125.0 684.7,125.4 684.0,125.8 683.4,126.1 682.8,126.5 682.2,126.9 681.7,127.3 681.2,127.7 680.8,128.1 680.4,128.5Z" fill="#ee10ee" stroke="#ee10ee" stroke-width="0.3"/><path d="M651.1,111.6 653.1,110.8 655.2,110.1 657.3,109.4 659.4,108.7 661.7,108.1 664.0,107.5 666.3,106.9 668.8,106.3 671.2,105.8 673.7,105.3 676.3,104.9 678.9,104.4 681.5,104.1 684.2,103.7 686.9,103.4 689.7,103.1 692.4,102.9 695.2,102.7 698.0,102.5 700.8,102.4 703.6,102.3 706.5,102.2 709.3,102.2 709.3,120.6 708.2,120.6 707.1,120.6 706.0,120.7 704.9,120.7 703.9,120.8 702.8,120.9 701.7,121.0 700.7,121.1 699.6,121.2 698.6,121.3 697.6,121.5 696.6,121.7 695.6,121.8 694.6,122.0 693.7,122.2 692.8,122.5 691.9,122.7 691.0,122.9 690.1,123.2 689.3,123.5 688.5,123.8 687.7,124.1 686.9,124.4Z" fill="#a8a8a8" stroke="#a8a8a8" stroke-width="0.3"/><path d="M788.8,131.7 788.8,132.7 788.6,133.8 788.4,134.8 788.0,135.8 787.6,136.8 787.1,137.8 786.4,138.8 785.7,139.8 784.9,140.8 784.0,141.8 783.0,142.8 781.9,143.7 780.8,144.6 779.5,145.5 778.1,146.4 776.7,147.3 775.2,148.2 773.6,149.0 771.9,149.9 770.2,150.7 768.4,151.4 766.5,152.2 764.5,152.9 762.5,153.6 760.4,154.3 758.2,154.9 756.0,155.6 753.8,156.2 751.4,156.7 749.0,157.2 746.6,157.7 744.2,158.2 741.6,158.6 739.1,159.1 736.5,159.4 733.9,159.8 731.2,160.1 728.5,160.3 725.8,160.6 723.1,160.8 720.4,160.9 717.6,161.0 714.8,161.1 712.1,161.2 709.3,161.2 706.5,161.2 703.8,161.1 701.0,161.0 698.2,160.9 695.5,160.8 692.8,160.6 690.1,160.3 687.4,160.1 684.7,159.8 682.1,159.4 679.5,159.1 677.0,158.6 674.4,158.2 672.0,157.7 669.5,157.2 667.2,156.7 664.8,156.2 662.6,155.6 660.4,154.9 658.2,154.3 656.1,153.6 654.1,152.9 652.1,152.2 650.2,151.4 648.4,150.7 646.7,149.9 645.0,149.0 643.4,148.2 641.9,147.3 640.5,146.4 639.1,145.5 637.8,144.6 636.7,143.7 635.6,142.8 634.6,141.8 633.7,140.8 632.9,139.8 632.2,138.8 631.5,137.8 631.0,136.8 630.6,135.8 630.2,134.8 630.0,133.8 629.8,132.7 629.8,131.7 629.8,130.7 630.0,129.6 630.2,128.6 630.6,127.6 631.0,126.6 631.5,125.6 632.2,124.6 632.9,123.6 633.7,122.6 634.6,121.6 635.6,120.6 636.7,119.7 637.8,118.8 639.1,117.9 640.5,116.9 641.9,116.1 643.4,115.2 645.0,114.4 646.7,113.5 648.4,112.7 650.2,112.0 652.1,111.2 654.1,110.5 656.1,109.8 658.2,109.1 660.4,108.5 662.6,107.8 664.8,107.2 667.2,106.7 669.5,106.2 672.0,105.7 674.4,105.2 677.0,104.8 679.5,104.3 682.1,104.0 684.7,103.6 687.4,103.3 690.1,103.1 692.8,102.8 695.5,102.6 698.2,102.5 701.0,102.4 703.8,102.3 706.5,102.2 709.3,102.2 712.1,102.2 714.8,102.3 717.6,102.4 720.4,102.5 723.1,102.6 725.8,102.8 728.5,103.1 731.2,103.3 733.9,103.6 736.5,104.0 739.1,104.3 741.6,104.8 744.2,105.2 746.6,105.7 749.0,106.2 751.4,106.7 753.8,107.2 756.0,107.8 758.2,108.5 760.4,109.1 762.5,109.8 764.5,110.5 766.5,111.2 768.4,112.0 770.2,112.7 771.9,113.5 773.6,114.4 775.2,115.2 776.7,116.1 778.1,116.9 779.5,117.9 780.8,118.8 781.9,119.7 783.0,120.6 784.0,121.6 784.9,122.6 785.7,123.6 786.4,124.6 787.1,125.6 787.6,126.6 788.0,127.6 788.4,128.6 788.6,129.6 788.8,130.7 788.8,131.7Z M739.9,132.4 739.9,132.0 739.8,131.6 739.7,131.2 739.6,130.8 739.4,130.4 739.2,129.9 739.0,129.5 738.7,129.1 738.4,128.8 738.1,128.4 737.7,128.0 737.3,127.6 736.8,127.2 736.3,126.9 735.8,126.5 735.3,126.1 734.7,125.8 734.1,125.5 733.4,125.1 732.7,124.8 732.0,124.5 731.3,124.2 730.6,123.9 729.8,123.6 729.0,123.4 728.1,123.1 727.3,122.9 726.4,122.6 725.5,122.4 724.6,122.2 723.7,122.0 722.7,121.8 721.7,121.6 720.8,121.5 719.8,121.3 718.8,121.2 717.7,121.1 716.7,121.0 715.7,120.9 714.6,120.8 713.6,120.7 712.5,120.7 711.4,120.6 710.4,120.6 709.3,120.6 708.2,120.6 707.2,120.6 706.1,120.7 705.0,120.7 704.0,120.8 702.9,120.9 701.9,121.0 700.9,121.1 699.8,121.2 698.8,121.3 697.8,121.5 696.9,121.6 695.9,121.8 694.9,122.0 694.0,122.2 693.1,122.4 692.2,122.6 691.3,122.9 690.5,123.1 689.6,123.4 688.8,123.6 688.0,123.9 687.3,124.2 686.6,124.5 685.9,124.8 685.2,125.1 684.5,125.5 683.9,125.8 683.3,126.1 682.8,126.5 682.3,126.9 681.8,127.2 681.3,127.6 680.9,128.0 680.5,128.4 680.2,128.8 679.9,129.1 679.6,129.5 679.4,129.9 679.2,130.4 679.0,130.8 678.9,131.2 678.8,131.6 678.7,132.0 678.7,132.4 678.7,132.8 678.8,133.2 678.9,133.6 679.0,134.0 679.2,134.4 679.4,134.9 679.6,135.3 679.9,135.7 680.2,136.0 680.5,136.4 680.9,136.8 681.3,137.2 681.8,137.6 682.3,137.9 682.8,138.3 683.3,138.7 683.9,139.0 684.5,139.3 685.2,139.7 685.9,140.0 686.6,140.3 687.3,140.6 688.0,140.9 688.8,141.2 689.6,141.4 690.5,141.7 691.3,141.9 692.2,142.2 693.1,142.4 694.0,142.6 694.9,142.8 695.9,143.0 696.9,143.2 697.8,143.3 698.8,143.5 699.8,143.6 700.9,143.7 701.9,143.8 702.9,143.9 704.0,144.0 705.0,144.1 706.1,144.1 707.2,144.2 708.2,144.2 709.3,144.2 710.4,144.2 711.4,144.2 712.5,144.1 713.6,144.1 714.6,144.0 715.7,143.9 716.7,143.8 717.7,143.7 718.8,143.6 719.8,143.5 720.8,143.3 721.7,143.2 722.7,143.0 723.7,142.8 724.6,142.6 725.5,142.4 726.4,142.2 727.3,141.9 728.1,141.7 729.0,141.4 729.8,141.2 730.6,140.9 731.3,140.6 732.0,140.3 732.7,140.0 733.4,139.7 734.1,139.3 734.7,139.0 735.3,138.7 735.8,138.3 736.3,137.9 736.8,137.6 737.3,137.2 737.7,136.8 738.1,136.4 738.4,136.0 738.7,135.7 739.0,135.3 739.2,134.9 739.4,134.4 739.6,134.0 739.7,133.6 739.8,133.2 739.9,132.8 739.9,132.4Z" fill="url(#shG)" fill-rule="evenodd"/>
<path d="M659.0,88.0 L690.0,113.0" fill="none" stroke="#bfbfbf" stroke-width="0.65"/>
<text transform="translate(617.20,89.90) scale(0.95,1)" font-size="6.0" font-weight="normal" fill="#333388" text-anchor="start" stroke="#333388" stroke-width="0.04" >Marketing - 149</text>
<path d="M602.0,106.0 L657.0,119.0" fill="none" stroke="#e666e6" stroke-width="0.65"/>
<text transform="translate(556.40,108.30) scale(0.95,1)" font-size="6.0" font-weight="normal" fill="#333388" text-anchor="start" stroke="#333388" stroke-width="0.04" >Management - 74</text>
<path d="M614.0,133.0 L650.0,133.0" fill="none" stroke="#66e6f3" stroke-width="0.65"/>
<text transform="translate(555.80,135.20) scale(0.95,1)" font-size="6.0" font-weight="normal" fill="#333388" text-anchor="start" stroke="#333388" stroke-width="0.04" >Implementations - 150</text>
<path d="M666.0,178.5 L690.0,153.0" fill="none" stroke="#ecec7f" stroke-width="0.65"/>
<text transform="translate(616.70,181.90) scale(0.95,1)" font-size="6.0" font-weight="normal" fill="#333388" text-anchor="start" stroke="#333388" stroke-width="0.04" >Development - 321</text>
<path d="M757.0,88.0 L735.0,106.0" fill="none" stroke="#73e673" stroke-width="0.65"/>
<text transform="translate(758.90,89.90) scale(0.95,1)" font-size="6.0" font-weight="normal" fill="#333388" text-anchor="start" stroke="#333388" stroke-width="0.04" >Sales - 151</text>
<path d="M825.5,114.0 L770.0,123.0" fill="none" stroke="#596c93" stroke-width="0.65"/>
<text transform="translate(862.40,116.30) scale(0.95,1)" font-size="6.0" font-weight="normal" fill="#333388" text-anchor="end" stroke="#333388" stroke-width="0.04" >Support - 151</text>
<path d="M825.5,140.0 L770.0,137.0" fill="none" stroke="#99d9a6" stroke-width="0.65"/>
<text transform="translate(862.40,142.30) scale(0.95,1)" font-size="6.0" font-weight="normal" fill="#333388" text-anchor="end" stroke="#333388" stroke-width="0.04" >Accounts - 54</text>
<path d="M807.0,163.0 L760.0,148.0" fill="none" stroke="#6666a6" stroke-width="0.65"/>
<text transform="translate(862.40,165.80) scale(0.95,1)" font-size="6.0" font-weight="normal" fill="#333388" text-anchor="end" stroke="#333388" stroke-width="0.04" >Customer Care - 149</text>
<rect x="161" y="342.9" width="113.6" height="17.3" fill="#55cc55"/>
<rect x="287.3" y="357.4" width="112.9" height="2.8" fill="#1a1ab8"/>
<rect x="413.1" y="244.0" width="113.3" height="116.2" fill="#f5f516"/>
<path d="M148.3,244.5 V363.0 M147.9,360.2 H539.8 V363.0 M217.75,360.2 V363.0 M343.85,360.2 V363.0 M469.95,360.2 V363.0" stroke="#222" stroke-width="0.8" fill="none"/>
<path d="M145.4,360.2 H148.3" stroke="#222" stroke-width="0.8"/>
<text transform="translate(143.80,362.80) scale(0.95,1)" font-size="5.6" font-weight="normal" fill="#111" text-anchor="end" stroke="#111" stroke-width="0.08" >0</text>
<path d="M145.4,348.7 H148.3" stroke="#222" stroke-width="0.8"/>
<text transform="translate(143.80,351.32) scale(0.95,1)" font-size="5.6" font-weight="normal" fill="#111" text-anchor="end" stroke="#111" stroke-width="0.08" >100</text>
<path d="M145.4,337.2 H148.3" stroke="#222" stroke-width="0.8"/>
<text transform="translate(143.80,339.84) scale(0.95,1)" font-size="5.6" font-weight="normal" fill="#111" text-anchor="end" stroke="#111" stroke-width="0.08" >200</text>
<path d="M145.4,325.8 H148.3" stroke="#222" stroke-width="0.8"/>
<text transform="translate(143.80,328.36) scale(0.95,1)" font-size="5.6" font-weight="normal" fill="#111" text-anchor="end" stroke="#111" stroke-width="0.08" >300</text>
<path d="M145.4,314.3 H148.3" stroke="#222" stroke-width="0.8"/>
<text transform="translate(143.80,316.88) scale(0.95,1)" font-size="5.6" font-weight="normal" fill="#111" text-anchor="end" stroke="#111" stroke-width="0.08" >400</text>
<path d="M145.4,302.8 H148.3" stroke="#222" stroke-width="0.8"/>
<text transform="translate(143.80,305.40) scale(0.95,1)" font-size="5.6" font-weight="normal" fill="#111" text-anchor="end" stroke="#111" stroke-width="0.08" >500</text>
<path d="M145.4,291.3 H148.3" stroke="#222" stroke-width="0.8"/>
<text transform="translate(143.80,293.92) scale(0.95,1)" font-size="5.6" font-weight="normal" fill="#111" text-anchor="end" stroke="#111" stroke-width="0.08" >600</text>
<path d="M145.4,279.8 H148.3" stroke="#222" stroke-width="0.8"/>
<text transform="translate(143.80,282.44) scale(0.95,1)" font-size="5.6" font-weight="normal" fill="#111" text-anchor="end" stroke="#111" stroke-width="0.08" >700</text>
<path d="M145.4,268.4 H148.3" stroke="#222" stroke-width="0.8"/>
<text transform="translate(143.80,270.96) scale(0.95,1)" font-size="5.6" font-weight="normal" fill="#111" text-anchor="end" stroke="#111" stroke-width="0.08" >800</text>
<path d="M145.4,256.9 H148.3" stroke="#222" stroke-width="0.8"/>
<text transform="translate(143.80,259.48) scale(0.95,1)" font-size="5.6" font-weight="normal" fill="#111" text-anchor="end" stroke="#111" stroke-width="0.08" >900</text>
<path d="M145.4,245.4 H148.3" stroke="#222" stroke-width="0.8"/>
<text transform="translate(143.80,248.00) scale(0.95,1)" font-size="5.6" font-weight="normal" fill="#111" text-anchor="end" stroke="#111" stroke-width="0.08" >1,000</text>
<text transform="translate(217.75,369.60) scale(0.95,1)" font-size="5.75" font-weight="normal" fill="#333388" text-anchor="middle" stroke="#333388" stroke-width="0.1" >Default Location</text>
<text transform="translate(343.85,369.60) scale(0.95,1)" font-size="5.75" font-weight="normal" fill="#333388" text-anchor="middle" stroke="#333388" stroke-width="0.1" >United Kingdom</text>
<text transform="translate(469.95,369.60) scale(0.95,1)" font-size="5.75" font-weight="normal" fill="#333388" text-anchor="middle" stroke="#333388" stroke-width="0.1" >United States</text>
<path d="M788.8,314.2 788.7,315.5 788.5,316.9 788.5,323.7 788.7,322.3 788.8,321.0Z" fill="#c5c56c" /><path d="M788.5,316.9 787.9,318.6 787.9,325.4 788.5,323.7Z" fill="#6cbebe" /><path d="M787.9,318.6 787.4,319.7 786.8,320.9 786.8,327.7 787.4,326.5 787.9,325.4Z" fill="#a366a3" /><path d="M786.8,320.9 786.1,321.9 785.3,322.9 784.5,323.9 783.5,324.9 782.5,325.9 781.3,326.9 780.1,327.8 778.8,328.7 777.4,329.6 775.9,330.5 774.3,331.4 772.7,332.2 771.0,333.1 769.2,333.9 767.3,334.7 765.3,335.4 763.3,336.1 761.2,336.8 759.1,337.5 756.9,338.1 754.6,338.8 752.3,339.3 749.9,339.9 747.5,340.4 745.0,340.9 742.5,341.4 740.0,341.8 737.4,342.2 734.7,342.5 732.1,342.8 729.4,343.1 726.7,343.4 723.9,343.6 721.2,343.8 718.4,343.9 715.6,344.0 712.9,344.1 710.1,344.1 707.3,344.1 704.5,344.0 701.7,344.0 698.9,343.8 696.2,343.7 693.4,343.5 690.7,343.3 688.0,343.0 685.3,342.7 682.7,342.4 680.1,342.0 677.5,341.6 674.9,341.2 672.4,340.7 670.0,340.2 667.6,339.7 665.2,339.1 662.9,338.5 660.7,337.9 658.5,337.2 656.4,336.5 654.4,335.8 652.4,335.1 650.5,334.3 648.6,333.5 646.9,332.7 645.2,331.9 643.6,331.0 642.0,330.1 640.6,329.2 639.2,328.3 637.9,327.4 636.8,326.4 635.7,325.5 634.7,324.5 633.7,323.5 632.9,322.5 632.2,321.5 631.6,320.5 631.0,319.4 630.6,318.4 630.2,317.3 630.0,316.3 629.8,315.2 629.8,314.2 629.8,321.0 629.8,322.0 630.0,323.1 630.2,324.1 630.6,325.2 631.0,326.2 631.6,327.3 632.2,328.3 632.9,329.3 633.7,330.3 634.7,331.3 635.7,332.3 636.8,333.2 637.9,334.2 639.2,335.1 640.6,336.0 642.0,336.9 643.6,337.8 645.2,338.7 646.9,339.5 648.6,340.3 650.5,341.1 652.4,341.9 654.4,342.6 656.4,343.3 658.5,344.0 660.7,344.7 662.9,345.3 665.2,345.9 667.6,346.5 670.0,347.0 672.4,347.5 674.9,348.0 677.5,348.4 680.1,348.8 682.7,349.2 685.3,349.5 688.0,349.8 690.7,350.1 693.4,350.3 696.2,350.5 698.9,350.6 701.7,350.8 704.5,350.8 707.3,350.9 710.1,350.9 712.9,350.9 715.6,350.8 718.4,350.7 721.2,350.6 723.9,350.4 726.7,350.2 729.4,349.9 732.1,349.6 734.7,349.3 737.4,349.0 740.0,348.6 742.5,348.2 745.0,347.7 747.5,347.2 749.9,346.7 752.3,346.1 754.6,345.6 756.9,344.9 759.1,344.3 761.2,343.6 763.3,342.9 765.3,342.2 767.3,341.5 769.2,340.7 771.0,339.9 772.7,339.0 774.3,338.2 775.9,337.3 777.4,336.4 778.8,335.5 780.1,334.6 781.3,333.7 782.5,332.7 783.5,331.7 784.5,330.7 785.3,329.7 786.1,328.7 786.8,327.7Z" fill="#888888" /><path d="M788.8,315.4 788.8,316.4 788.6,317.5 788.4,318.5 788.0,319.6 787.6,320.6 787.1,321.6 786.4,322.6 785.7,323.6 784.9,324.6 784.0,325.6 783.0,326.6 781.9,327.6 780.8,328.5 779.5,329.4 778.1,330.3 776.7,331.2 775.2,332.1 773.6,333.0 771.9,333.8 770.2,334.6 768.4,335.4 766.5,336.2 764.5,336.9 762.5,337.6 760.4,338.3 758.2,339.0 756.0,339.6 753.8,340.2 751.4,340.8 749.0,341.3 746.6,341.8 744.2,342.3 741.6,342.7 739.1,343.1 736.5,343.5 733.9,343.8 731.2,344.1 728.5,344.4 725.8,344.6 723.1,344.8 720.4,345.0 717.6,345.1 714.8,345.2 712.1,345.3 709.3,345.3 706.5,345.3 703.8,345.2 701.0,345.1 698.2,345.0 695.5,344.8 692.8,344.6 690.1,344.4 687.4,344.1 684.7,343.8 682.1,343.5 679.5,343.1 677.0,342.7 674.4,342.3 672.0,341.8 669.5,341.3 667.2,340.8 664.8,340.2 662.6,339.6 660.4,339.0 658.2,338.3 656.1,337.6 654.1,336.9 652.1,336.2 650.2,335.4 648.4,334.6 646.7,333.8 645.0,333.0 643.4,332.1 641.9,331.2 640.5,330.3 639.1,329.4 637.8,328.5 636.7,327.6 635.6,326.6 634.6,325.6 633.7,324.6 632.9,323.6 632.2,322.6 631.5,321.6 631.0,320.6 630.6,319.6 630.2,318.5 630.0,317.5 629.8,316.4 629.8,315.4 629.8,321.0 629.8,322.0 630.0,323.1 630.2,324.1 630.6,325.2 631.0,326.2 631.5,327.2 632.2,328.2 632.9,329.2 633.7,330.2 634.6,331.2 635.6,332.2 636.7,333.2 637.8,334.1 639.1,335.0 640.5,335.9 641.9,336.8 643.4,337.7 645.0,338.6 646.7,339.4 648.4,340.2 650.2,341.0 652.1,341.8 654.1,342.5 656.1,343.2 658.2,343.9 660.4,344.6 662.6,345.2 664.8,345.8 667.2,346.4 669.5,346.9 672.0,347.4 674.4,347.9 677.0,348.3 679.5,348.7 682.1,349.1 684.7,349.4 687.4,349.7 690.1,350.0 692.8,350.2 695.5,350.4 698.2,350.6 701.0,350.7 703.8,350.8 706.5,350.9 709.3,350.9 712.1,350.9 714.8,350.8 717.6,350.7 720.4,350.6 723.1,350.4 725.8,350.2 728.5,350.0 731.2,349.7 733.9,349.4 736.5,349.1 739.1,348.7 741.6,348.3 744.2,347.9 746.6,347.4 749.0,346.9 751.4,346.4 753.8,345.8 756.0,345.2 758.2,344.6 760.4,343.9 762.5,343.2 764.5,342.5 766.5,341.8 768.4,341.0 770.2,340.2 771.9,339.4 773.6,338.6 775.2,337.7 776.7,336.8 778.1,335.9 779.5,335.0 780.8,334.1 781.9,333.2 783.0,332.2 784.0,331.2 784.9,330.2 785.7,329.2 786.4,328.2 787.1,327.2 787.6,326.2 788.0,325.2 788.4,324.1 788.6,323.1 788.8,322.0 788.8,321.0Z" fill="url(#shG2)" /><path d="M740.3,314.7 740.3,314.8 740.3,320.2 740.3,320.1Z" fill="#4c9980" /><path d="M740.3,314.8 740.3,315.0 740.3,320.4 740.3,320.2Z" fill="#2e2e73" /><path d="M740.3,315.0 740.3,315.0 740.3,320.4 740.3,320.4Z" fill="#b9b966" /><path d="M678.3,315.0 678.3,314.6 678.4,314.2 678.5,313.8 678.6,313.3 678.8,312.9 679.0,312.5 679.2,312.1 679.5,311.7 679.9,311.3 680.2,310.9 680.6,310.6 681.1,310.2 681.5,309.8 682.0,309.4 682.6,309.1 683.1,308.7 683.8,308.4 684.4,308.0 685.1,307.7 685.8,307.4 686.5,307.1 687.2,306.8 688.0,306.5 688.8,306.2 688.8,311.6 688.0,311.9 687.2,312.2 686.5,312.5 685.8,312.8 685.1,313.1 684.4,313.4 683.8,313.8 683.1,314.1 682.6,314.5 682.0,314.8 681.5,315.2 681.1,315.6 680.6,316.0 680.2,316.3 679.9,316.7 679.5,317.1 679.2,317.5 679.0,317.9 678.8,318.3 678.6,318.7 678.5,319.2 678.4,319.6 678.3,320.0 678.3,320.4Z" fill="#808080" /><path d="M688.8,306.2 689.0,306.2 689.0,311.6 688.8,311.6Z" fill="#59a659" /><path d="M689.0,306.2 690.0,305.8 690.0,311.2 689.0,311.6Z" fill="#192c4c" /><path d="M690.0,305.8 690.2,305.8 690.2,311.2 690.0,311.2Z" fill="#804c40" /><path d="M690.2,305.8 690.4,305.7 690.4,311.1 690.2,311.2Z" fill="#338040" /><path d="M690.4,305.7 692.1,305.3 692.1,310.7 690.4,311.1Z" fill="#0b2e40" /><path d="M692.1,305.3 692.5,305.2 692.5,310.6 692.1,310.7Z" fill="#a6a64c" /><path d="M692.5,305.2 692.6,305.1 692.6,310.5 692.5,310.6Z" fill="#4c80a6" /><path d="M692.6,305.1 692.7,305.1 692.7,310.5 692.6,310.5Z" fill="#664080" /><path d="M692.7,305.1 692.8,305.1 692.8,310.5 692.7,310.5Z" fill="#99598c" /><path d="M692.8,305.1 693.0,305.1 693.0,310.5 692.8,310.5Z" fill="#a66680" /><path d="M693.0,305.1 693.9,304.8 694.9,304.6 695.8,304.5 696.8,304.3 697.8,304.1 698.9,304.0 699.9,303.9 700.9,303.7 702.0,303.6 703.1,303.5 704.1,303.5 705.2,303.4 706.3,303.4 707.4,303.3 708.5,303.3 709.6,303.3 710.7,303.3 711.7,303.3 712.8,303.4 713.9,303.4 715.0,303.5 716.1,303.6 717.1,303.7 718.2,303.8 719.2,303.9 720.2,304.1 721.3,304.2 722.3,304.4 723.2,304.5 724.2,304.7 725.2,304.9 726.1,305.2 727.0,305.4 727.9,305.6 728.7,305.9 729.6,306.1 730.4,306.4 731.2,306.7 731.9,307.0 732.7,307.3 733.4,307.6 734.0,307.9 734.7,308.3 735.3,308.6 735.9,309.0 736.4,309.3 736.9,309.7 737.4,310.1 737.8,310.4 738.3,310.8 738.6,311.2 739.0,311.6 739.3,312.0 739.5,312.4 739.7,312.8 739.9,313.2 740.1,313.6 740.2,314.0 740.3,314.4 740.3,319.8 740.2,319.4 740.1,319.0 739.9,318.6 739.7,318.2 739.5,317.8 739.3,317.4 739.0,317.0 738.6,316.6 738.3,316.2 737.8,315.8 737.4,315.5 736.9,315.1 736.4,314.7 735.9,314.4 735.3,314.0 734.7,313.7 734.0,313.3 733.4,313.0 732.7,312.7 731.9,312.4 731.2,312.1 730.4,311.8 729.6,311.5 728.7,311.3 727.9,311.0 727.0,310.8 726.1,310.6 725.2,310.3 724.2,310.1 723.2,309.9 722.3,309.8 721.3,309.6 720.2,309.5 719.2,309.3 718.2,309.2 717.1,309.1 716.1,309.0 715.0,308.9 713.9,308.8 712.8,308.8 711.7,308.7 710.7,308.7 709.6,308.7 708.5,308.7 707.4,308.7 706.3,308.8 705.2,308.8 704.1,308.9 703.1,308.9 702.0,309.0 700.9,309.1 699.9,309.3 698.9,309.4 697.8,309.5 696.8,309.7 695.8,309.9 694.9,310.0 693.9,310.2 693.0,310.5Z" fill="#4040a6" /><path d="M740.3,314.4 740.3,314.7 740.3,320.1 740.3,319.8Z" fill="#a6b373" /><path d="M788.8,314.7 788.8,315.0 740.3,316.0 740.3,315.9Z" fill="#60c0a0" stroke="#60c0a0" stroke-width="0.3"/><path d="M788.8,315.0 788.8,315.4 740.3,316.2 740.3,316.0Z" fill="#3a3a90" stroke="#3a3a90" stroke-width="0.3"/><path d="M788.8,315.4 788.7,316.7 788.5,318.1 740.2,317.2 740.3,316.7 740.3,316.2Z" fill="#e8e880" stroke="#e8e880" stroke-width="0.3"/><path d="M788.5,318.1 787.9,319.8 740.0,317.9 740.2,317.2Z" fill="#80e0e0" stroke="#80e0e0" stroke-width="0.3"/><path d="M787.9,319.8 787.4,320.9 786.8,322.1 739.5,318.8 739.8,318.4 740.0,317.9Z" fill="#c078c0" stroke="#c078c0" stroke-width="0.3"/><path d="M786.8,322.1 786.1,323.1 785.3,324.1 784.5,325.1 783.5,326.1 782.4,327.1 781.3,328.1 780.1,329.0 778.8,329.9 777.4,330.9 775.9,331.7 774.3,332.6 772.6,333.5 770.9,334.3 769.1,335.1 767.2,335.9 765.3,336.6 763.3,337.4 761.2,338.1 759.0,338.7 756.8,339.4 754.5,340.0 752.2,340.6 749.8,341.1 747.4,341.6 744.9,342.1 742.4,342.6 739.8,343.0 737.2,343.4 734.6,343.7 731.9,344.1 729.2,344.3 726.5,344.6 723.8,344.8 721.0,345.0 718.2,345.1 715.5,345.2 712.7,345.3 709.9,345.3 707.1,345.3 704.3,345.2 701.5,345.2 698.7,345.0 695.9,344.9 693.2,344.7 690.5,344.4 687.8,344.2 685.1,343.9 682.4,343.5 679.8,343.2 677.2,342.8 674.7,342.3 672.2,341.8 669.7,341.3 667.3,340.8 665.0,340.2 662.7,339.6 660.5,339.0 658.3,338.3 656.2,337.6 654.1,336.9 652.1,336.2 650.2,335.4 648.4,334.6 646.6,333.8 645.0,333.0 643.4,332.1 641.8,331.2 640.4,330.3 639.0,329.4 637.8,328.5 636.6,327.5 635.5,326.5 634.5,325.5 633.6,324.6 632.8,323.5 632.1,322.5 631.5,321.5 631.0,320.5 630.5,319.4 630.2,318.4 630.0,317.3 629.8,316.3 629.8,315.2 629.9,314.2 630.0,313.1 630.3,312.1 630.7,311.0 631.1,310.0 631.7,309.0 632.3,307.9 633.1,306.9 633.9,305.9 634.8,304.9 635.9,304.0 637.0,303.0 638.2,302.0 639.5,301.1 640.8,300.2 642.3,299.3 643.9,298.4 645.5,297.6 647.2,296.7 649.0,295.9 650.8,295.1 652.8,294.4 654.8,293.6 656.8,292.9 688.8,307.4 688.0,307.7 687.3,308.0 686.5,308.3 685.8,308.6 685.1,308.9 684.4,309.2 683.8,309.6 683.2,309.9 682.6,310.3 682.1,310.6 681.6,311.0 681.1,311.3 680.7,311.7 680.3,312.1 679.9,312.5 679.6,312.9 679.3,313.3 679.0,313.7 678.8,314.1 678.6,314.5 678.5,314.9 678.4,315.3 678.3,315.7 678.3,316.1 678.3,316.5 678.4,317.0 678.5,317.4 678.6,317.8 678.7,318.2 679.0,318.6 679.2,319.0 679.5,319.4 679.8,319.8 680.1,320.2 680.5,320.6 681.0,320.9 681.4,321.3 681.9,321.7 682.4,322.0 683.0,322.4 683.6,322.7 684.2,323.1 684.9,323.4 685.6,323.7 686.3,324.0 687.0,324.3 687.8,324.6 688.6,324.9 689.4,325.2 690.3,325.4 691.1,325.7 692.0,325.9 692.9,326.1 693.9,326.3 694.8,326.5 695.8,326.7 696.8,326.9 697.8,327.1 698.8,327.2 699.9,327.3 700.9,327.5 702.0,327.6 703.0,327.7 704.1,327.7 705.2,327.8 706.3,327.8 707.3,327.9 708.4,327.9 709.5,327.9 710.6,327.9 711.7,327.9 712.8,327.8 713.9,327.8 714.9,327.7 716.0,327.6 717.1,327.5 718.1,327.4 719.2,327.3 720.2,327.2 721.2,327.0 722.2,326.8 723.2,326.7 724.2,326.5 725.1,326.3 726.0,326.0 726.9,325.8 727.8,325.6 728.7,325.3 729.5,325.1 730.3,324.8 731.1,324.5 731.9,324.2 732.6,323.9 733.3,323.6 734.0,323.3 734.6,322.9 735.3,322.6 735.8,322.2 736.4,321.9 736.9,321.5 737.4,321.2 737.8,320.8 738.2,320.4 738.6,320.0 738.9,319.6 739.2,319.2 739.5,318.8Z" fill="#a0a0a0" stroke="#a0a0a0" stroke-width="0.3"/><path d="M656.8,292.9 657.2,292.8 689.0,307.4 688.8,307.4Z" fill="#70d070" stroke="#70d070" stroke-width="0.3"/><path d="M657.2,292.8 659.9,292.0 690.0,307.0 689.0,307.4Z" fill="#203860" stroke="#203860" stroke-width="0.3"/><path d="M659.9,292.0 660.2,291.9 690.2,307.0 690.0,307.0Z" fill="#a06050" stroke="#a06050" stroke-width="0.3"/><path d="M660.2,291.9 660.8,291.7 690.4,306.9 690.2,307.0Z" fill="#40a050" stroke="#40a050" stroke-width="0.3"/><path d="M660.8,291.7 665.2,290.5 692.1,306.5 690.4,306.9Z" fill="#0e3a50" stroke="#0e3a50" stroke-width="0.3"/><path d="M665.2,290.5 666.1,290.3 692.5,306.4 692.1,306.5Z" fill="#d0d060" stroke="#d0d060" stroke-width="0.3"/><path d="M666.1,290.3 666.5,290.2 692.6,306.3 692.5,306.4Z" fill="#60a0d0" stroke="#60a0d0" stroke-width="0.3"/><path d="M666.5,290.2 666.8,290.1 692.7,306.3 692.6,306.3Z" fill="#8050a0" stroke="#8050a0" stroke-width="0.3"/><path d="M666.8,290.1 667.1,290.1 692.8,306.3 692.7,306.3Z" fill="#c070b0" stroke="#c070b0" stroke-width="0.3"/><path d="M667.1,290.1 667.4,290.0 693.0,306.3 692.8,306.3Z" fill="#d080a0" stroke="#d080a0" stroke-width="0.3"/><path d="M667.4,290.0 669.8,289.4 672.3,288.9 674.8,288.5 677.3,288.0 679.9,287.6 682.5,287.2 685.2,286.9 687.9,286.6 690.6,286.3 693.3,286.1 696.0,285.9 698.8,285.8 701.6,285.6 704.4,285.6 707.2,285.5 710.0,285.5 712.8,285.5 715.6,285.6 718.4,285.7 721.1,285.8 723.9,286.0 726.6,286.2 729.4,286.5 732.1,286.8 734.7,287.1 737.4,287.4 740.0,287.8 742.5,288.2 745.0,288.7 747.5,289.2 750.0,289.7 752.3,290.3 754.7,290.8 756.9,291.5 759.1,292.1 761.3,292.8 763.4,293.5 765.4,294.2 767.3,295.0 769.2,295.7 771.0,296.6 772.7,297.4 774.4,298.2 776.0,299.1 777.4,300.0 778.8,300.9 780.2,301.8 781.4,302.8 782.5,303.7 783.6,304.7 784.5,305.7 785.4,306.7 786.1,307.7 786.8,308.8 787.4,309.8 787.9,310.8 788.2,311.9 788.5,312.9 788.7,314.0 740.3,315.6 740.2,315.2 740.1,314.8 739.9,314.4 739.7,314.0 739.5,313.6 739.3,313.2 739.0,312.8 738.6,312.4 738.3,312.0 737.8,311.6 737.4,311.3 736.9,310.9 736.4,310.5 735.9,310.2 735.3,309.8 734.7,309.5 734.0,309.1 733.4,308.8 732.7,308.5 731.9,308.2 731.2,307.9 730.4,307.6 729.6,307.3 728.7,307.1 727.9,306.8 727.0,306.6 726.1,306.4 725.2,306.1 724.2,305.9 723.2,305.7 722.3,305.6 721.3,305.4 720.2,305.3 719.2,305.1 718.2,305.0 717.1,304.9 716.1,304.8 715.0,304.7 713.9,304.6 712.8,304.6 711.7,304.5 710.7,304.5 709.6,304.5 708.5,304.5 707.4,304.5 706.3,304.6 705.2,304.6 704.1,304.7 703.1,304.7 702.0,304.8 700.9,304.9 699.9,305.1 698.9,305.2 697.8,305.3 696.8,305.5 695.8,305.7 694.9,305.8 693.9,306.0 693.0,306.3Z" fill="#5050d0" stroke="#5050d0" stroke-width="0.3"/><path d="M788.7,314.0 788.8,314.7 740.3,315.9 740.3,315.6Z" fill="#d0e090" stroke="#d0e090" stroke-width="0.3"/><path d="M788.8,315.4 788.8,316.4 788.6,317.5 788.4,318.5 788.0,319.6 787.6,320.6 787.1,321.6 786.4,322.6 785.7,323.6 784.9,324.6 784.0,325.6 783.0,326.6 781.9,327.6 780.8,328.5 779.5,329.4 778.1,330.3 776.7,331.2 775.2,332.1 773.6,333.0 771.9,333.8 770.2,334.6 768.4,335.4 766.5,336.2 764.5,336.9 762.5,337.6 760.4,338.3 758.2,339.0 756.0,339.6 753.8,340.2 751.4,340.8 749.0,341.3 746.6,341.8 744.2,342.3 741.6,342.7 739.1,343.1 736.5,343.5 733.9,343.8 731.2,344.1 728.5,344.4 725.8,344.6 723.1,344.8 720.4,345.0 717.6,345.1 714.8,345.2 712.1,345.3 709.3,345.3 706.5,345.3 703.8,345.2 701.0,345.1 698.2,345.0 695.5,344.8 692.8,344.6 690.1,344.4 687.4,344.1 684.7,343.8 682.1,343.5 679.5,343.1 677.0,342.7 674.4,342.3 672.0,341.8 669.5,341.3 667.2,340.8 664.8,340.2 662.6,339.6 660.4,339.0 658.2,338.3 656.1,337.6 654.1,336.9 652.1,336.2 650.2,335.4 648.4,334.6 646.7,333.8 645.0,333.0 643.4,332.1 641.9,331.2 640.5,330.3 639.1,329.4 637.8,328.5 636.7,327.6 635.6,326.6 634.6,325.6 633.7,324.6 632.9,323.6 632.2,322.6 631.5,321.6 631.0,320.6 630.6,319.6 630.2,318.5 630.0,317.5 629.8,316.4 629.8,315.4 629.8,314.4 630.0,313.3 630.2,312.3 630.6,311.2 631.0,310.2 631.5,309.2 632.2,308.2 632.9,307.2 633.7,306.2 634.6,305.2 635.6,304.2 636.7,303.2 637.8,302.3 639.1,301.4 640.5,300.4 641.9,299.6 643.4,298.7 645.0,297.8 646.7,297.0 648.4,296.2 650.2,295.4 652.1,294.6 654.1,293.9 656.1,293.2 658.2,292.5 660.4,291.8 662.6,291.2 664.8,290.6 667.2,290.0 669.5,289.5 672.0,289.0 674.4,288.5 677.0,288.1 679.5,287.7 682.1,287.3 684.7,287.0 687.4,286.7 690.1,286.4 692.8,286.2 695.5,286.0 698.2,285.8 701.0,285.7 703.8,285.6 706.5,285.5 709.3,285.5 712.1,285.5 714.8,285.6 717.6,285.7 720.4,285.8 723.1,286.0 725.8,286.2 728.5,286.4 731.2,286.7 733.9,287.0 736.5,287.3 739.1,287.7 741.6,288.1 744.2,288.5 746.6,289.0 749.0,289.5 751.4,290.0 753.8,290.6 756.0,291.2 758.2,291.8 760.4,292.5 762.5,293.2 764.5,293.9 766.5,294.6 768.4,295.4 770.2,296.2 771.9,297.0 773.6,297.8 775.2,298.7 776.7,299.6 778.1,300.4 779.5,301.4 780.8,302.3 781.9,303.2 783.0,304.2 784.0,305.2 784.9,306.2 785.7,307.2 786.4,308.2 787.1,309.2 787.6,310.2 788.0,311.2 788.4,312.3 788.6,313.3 788.8,314.4 788.8,315.4Z M740.3,316.2 740.3,315.8 740.2,315.4 740.1,315.0 740.0,314.6 739.8,314.2 739.6,313.8 739.4,313.4 739.1,313.0 738.8,312.6 738.4,312.2 738.0,311.8 737.6,311.4 737.2,311.1 736.7,310.7 736.1,310.3 735.6,310.0 735.0,309.7 734.4,309.3 733.7,309.0 733.0,308.7 732.3,308.4 731.6,308.1 730.8,307.8 730.0,307.5 729.2,307.2 728.4,307.0 727.5,306.7 726.6,306.5 725.7,306.3 724.8,306.1 723.9,305.9 722.9,305.7 721.9,305.5 720.9,305.4 719.9,305.2 718.9,305.1 717.8,305.0 716.8,304.8 715.7,304.8 714.7,304.7 713.6,304.6 712.5,304.6 711.5,304.5 710.4,304.5 709.3,304.5 708.2,304.5 707.1,304.5 706.1,304.6 705.0,304.6 703.9,304.7 702.9,304.8 701.8,304.8 700.8,305.0 699.7,305.1 698.7,305.2 697.7,305.4 696.7,305.5 695.7,305.7 694.7,305.9 693.8,306.1 692.9,306.3 692.0,306.5 691.1,306.7 690.2,307.0 689.4,307.2 688.6,307.5 687.8,307.8 687.0,308.1 686.3,308.4 685.6,308.7 684.9,309.0 684.2,309.3 683.6,309.7 683.0,310.0 682.5,310.3 681.9,310.7 681.4,311.1 681.0,311.4 680.6,311.8 680.2,312.2 679.8,312.6 679.5,313.0 679.2,313.4 679.0,313.8 678.8,314.2 678.6,314.6 678.5,315.0 678.4,315.4 678.3,315.8 678.3,316.2 678.3,316.6 678.4,317.0 678.5,317.4 678.6,317.8 678.8,318.2 679.0,318.6 679.2,319.0 679.5,319.4 679.8,319.8 680.2,320.2 680.6,320.6 681.0,321.0 681.4,321.3 681.9,321.7 682.5,322.1 683.0,322.4 683.6,322.7 684.2,323.1 684.9,323.4 685.6,323.7 686.3,324.0 687.0,324.3 687.8,324.6 688.6,324.9 689.4,325.2 690.2,325.4 691.1,325.7 692.0,325.9 692.9,326.1 693.8,326.3 694.7,326.5 695.7,326.7 696.7,326.9 697.7,327.0 698.7,327.2 699.7,327.3 700.8,327.4 701.8,327.6 702.9,327.6 703.9,327.7 705.0,327.8 706.1,327.8 707.1,327.9 708.2,327.9 709.3,327.9 710.4,327.9 711.5,327.9 712.5,327.8 713.6,327.8 714.7,327.7 715.7,327.6 716.8,327.6 717.8,327.4 718.9,327.3 719.9,327.2 720.9,327.0 721.9,326.9 722.9,326.7 723.9,326.5 724.8,326.3 725.7,326.1 726.6,325.9 727.5,325.7 728.4,325.4 729.2,325.2 730.0,324.9 730.8,324.6 731.6,324.3 732.3,324.0 733.0,323.7 733.7,323.4 734.4,323.1 735.0,322.7 735.6,322.4 736.1,322.1 736.7,321.7 737.2,321.3 737.6,321.0 738.0,320.6 738.4,320.2 738.8,319.8 739.1,319.4 739.4,319.0 739.6,318.6 739.8,318.2 740.0,317.8 740.1,317.4 740.2,317.0 740.3,316.6 740.3,316.2Z" fill="url(#shG)" fill-rule="evenodd"/>
<path d="M649.0,239.0 L686.0,300.0" fill="none" stroke="#d999b3" stroke-width="0.65"/>
<text transform="translate(647.90,242.30) scale(0.95,1)" font-size="6.0" font-weight="normal" fill="#333388" text-anchor="end" stroke="#333388" stroke-width="0.04" >ViewSonic - 1</text>
<path d="M649.0,248.0 L686.0,300.0" fill="none" stroke="#cc8cbf" stroke-width="0.65"/>
<text transform="translate(647.90,250.40) scale(0.95,1)" font-size="6.0" font-weight="normal" fill="#333388" text-anchor="end" stroke="#333388" stroke-width="0.04" >Unknown - 1</text>
<path d="M649.0,257.0 L685.0,300.0" fill="none" stroke="#a67fbf" stroke-width="0.65"/>
<text transform="translate(647.90,258.90) scale(0.95,1)" font-size="6.0" font-weight="normal" fill="#333388" text-anchor="end" stroke="#333388" stroke-width="0.04" >System manufacturer - 1</text>
<path d="M649.0,265.0 L684.0,300.0" fill="none" stroke="#99cce6" stroke-width="0.65"/>
<text transform="translate(647.90,267.10) scale(0.95,1)" font-size="6.0" font-weight="normal" fill="#333388" text-anchor="end" stroke="#333388" stroke-width="0.04" >Supermicro - 1</text>
<path d="M646.0,273.0 L683.0,300.0" fill="none" stroke="#dfdf8c" stroke-width="0.65"/>
<text transform="translate(644.30,275.20) scale(0.95,1)" font-size="6.0" font-weight="normal" fill="#333388" text-anchor="end" stroke="#333388" stroke-width="0.04" >NEC - 3</text>
<path d="M639.0,281.0 L670.0,293.0" fill="none" stroke="#666699" stroke-width="0.65"/>
<text transform="translate(637.10,283.30) scale(0.95,1)" font-size="6.0" font-weight="normal" fill="#333388" text-anchor="end" stroke="#333388" stroke-width="0.04" >Microsoft - 14</text>
<path d="M632.5,289.6 L668.0,294.0" fill="none" stroke="#73cc7f" stroke-width="0.65"/>
<text transform="translate(630.80,291.80) scale(0.95,1)" font-size="6.0" font-weight="normal" fill="#333388" text-anchor="end" stroke="#333388" stroke-width="0.04" >Lenovo - 2</text>
<path d="M630.5,297.7 L665.0,296.0" fill="none" stroke="#bf8c7f" stroke-width="0.65"/>
<text transform="translate(629.00,299.90) scale(0.95,1)" font-size="6.0" font-weight="normal" fill="#333388" text-anchor="end" stroke="#333388" stroke-width="0.04" >KRM - 1</text>
<path d="M626.5,305.4 L663.0,298.0" fill="none" stroke="#596c99" stroke-width="0.65"/>
<text transform="translate(625.00,307.60) scale(0.95,1)" font-size="6.0" font-weight="normal" fill="#333388" text-anchor="end" stroke="#333388" stroke-width="0.04" >HP - 9</text>
<path d="M623.0,314.4 L662.0,300.0" fill="none" stroke="#99e699" stroke-width="0.65"/>
<text transform="translate(621.40,316.60) scale(0.95,1)" font-size="6.0" font-weight="normal" fill="#333388" text-anchor="end" stroke="#333388" stroke-width="0.04" >Fujitsu - 1</text>
<path d="M648.0,358.5 L679.0,337.0" fill="none" stroke="#bfbfbf" stroke-width="0.65"/>
<text transform="translate(646.00,360.90) scale(0.95,1)" font-size="6.0" font-weight="normal" fill="#333388" text-anchor="end" stroke="#333388" stroke-width="0.04" >Dell - 478</text>
<text transform="translate(777.10,275.70) scale(0.95,1)" font-size="6.0" font-weight="normal" fill="#333388" text-anchor="start" stroke="#333388" stroke-width="0.04" >VMware - 255</text>
<path d="M775.5,273.5 L738.0,298.0" fill="none" stroke="#9999cc" stroke-width="0.65"/>
<path d="M836.5,293.3 L760.0,315.0" fill="none" stroke="#e6e6b3" stroke-width="0.65"/>
<text transform="translate(838.80,295.50) scale(0.95,1)" font-size="6.0" font-weight="normal" fill="#333388" text-anchor="start" stroke="#333388" stroke-width="0.04" >Xen - 2</text>
<path d="M836.5,301.7 L760.0,315.0" fill="none" stroke="#a6d9bf" stroke-width="0.65"/>
<text transform="translate(838.80,303.90) scale(0.95,1)" font-size="6.0" font-weight="normal" fill="#333388" text-anchor="start" stroke="#333388" stroke-width="0.04" >@@@ - 1</text>
<path d="M836.5,310.0 L760.0,315.0" fill="none" stroke="#6666a6" stroke-width="0.65"/>
<text transform="translate(838.80,312.20) scale(0.95,1)" font-size="6.0" font-weight="normal" fill="#333388" text-anchor="start" stroke="#333388" stroke-width="0.04" >Acer - 1</text>
<path d="M836.5,318.0 L760.0,315.0" fill="none" stroke="#f3f3b3" stroke-width="0.65"/>
<text transform="translate(838.80,320.20) scale(0.95,1)" font-size="6.0" font-weight="normal" fill="#333388" text-anchor="start" stroke="#333388" stroke-width="0.04" >Apple - 8</text>
<path d="M836.5,326.6 L760.0,315.0" fill="none" stroke="#b3ecec" stroke-width="0.65"/>
<text transform="translate(838.80,328.80) scale(0.95,1)" font-size="6.0" font-weight="normal" fill="#333388" text-anchor="start" stroke="#333388" stroke-width="0.04" >Asus - 5</text>
<path d="M836.5,334.1 L760.0,315.0" fill="none" stroke="#d97fd9" stroke-width="0.65"/>
<text transform="translate(838.80,336.30) scale(0.95,1)" font-size="6.0" font-weight="normal" fill="#333388" text-anchor="start" stroke="#333388" stroke-width="0.04" >Cisco - 7</text>
<rect x="124" y="43" width="424" height="12.7" fill="url(#hdr)"/>
<path d="M124,55.400000000000006 H548" stroke="#e2e2e2" stroke-width="1"/>
<text transform="translate(128.90,51.40) scale(0.93,1)" font-size="6.6" font-weight="bold" fill="#94641e" text-anchor="start" stroke="#94641e" stroke-width="0.1" >All Assets by Category</text>
<path d="M526.4,46.9 L529.0,49.5 L527.15,49.5 L527.15,51.9 L525.65,51.9 L525.65,49.5 L523.8,49.5 Z" fill="#1a2a80"/>
<g fill="#1a2a80"><rect x="536.3000000000001" y="46.5" width="1.7" height="1.7"/><rect x="539.7" y="46.5" width="1.7" height="1.7"/><rect x="536.3000000000001" y="49.9" width="1.7" height="1.7"/><rect x="539.7" y="49.9" width="1.7" height="1.7"/></g><path d="M537.0500000000001,47.25 L540.65,50.849999999999994 M540.65,47.25 L537.0500000000001,50.849999999999994" stroke="#3848b0" stroke-width="0.9"/>
<rect x="551" y="43" width="318" height="12.7" fill="url(#hdr)"/>
<path d="M551,55.400000000000006 H869" stroke="#e2e2e2" stroke-width="1"/>
<text transform="translate(555.90,51.40) scale(0.93,1)" font-size="6.6" font-weight="bold" fill="#94641e" text-anchor="start" stroke="#94641e" stroke-width="0.1" >All Assets by Department</text>
<path d="M847.4,46.9 L850.0,49.5 L848.15,49.5 L848.15,51.9 L846.65,51.9 L846.65,49.5 L844.8,49.5 Z" fill="#1a2a80"/>
<g fill="#1a2a80"><rect x="857.3000000000001" y="46.5" width="1.7" height="1.7"/><rect x="860.7" y="46.5" width="1.7" height="1.7"/><rect x="857.3000000000001" y="49.9" width="1.7" height="1.7"/><rect x="860.7" y="49.9" width="1.7" height="1.7"/></g><path d="M858.0500000000001,47.25 L861.65,50.849999999999994 M861.65,47.25 L858.0500000000001,50.849999999999994" stroke="#3848b0" stroke-width="0.9"/>
<rect x="124" y="225" width="424" height="13.7" fill="url(#hdr)"/>
<path d="M124,238.39999999999998 H548" stroke="#e2e2e2" stroke-width="1"/>
<text transform="translate(128.90,234.25) scale(0.93,1)" font-size="6.6" font-weight="bold" fill="#94641e" text-anchor="start" stroke="#94641e" stroke-width="0.1" >All Assets by Location</text>
<path d="M526.4,229.4 L529.0,232.0 L527.15,232.0 L527.15,234.4 L525.65,234.4 L525.65,232.0 L523.8,232.0 Z" fill="#1a2a80"/>
<g fill="#1a2a80"><rect x="536.3000000000001" y="229.0" width="1.7" height="1.7"/><rect x="539.7" y="229.0" width="1.7" height="1.7"/><rect x="536.3000000000001" y="232.4" width="1.7" height="1.7"/><rect x="539.7" y="232.4" width="1.7" height="1.7"/></g><path d="M537.0500000000001,229.75 L540.65,233.35000000000002 M540.65,229.75 L537.0500000000001,233.35000000000002" stroke="#3848b0" stroke-width="0.9"/>
<rect x="551" y="225" width="318" height="13.7" fill="url(#hdr)"/>
<path d="M551,238.39999999999998 H869" stroke="#e2e2e2" stroke-width="1"/>
<text transform="translate(555.90,234.25) scale(0.93,1)" font-size="6.6" font-weight="bold" fill="#94641e" text-anchor="start" stroke="#94641e" stroke-width="0.1" >All Assets by Manufacturer and Model</text>
<path d="M847.4,229.4 L850.0,232.0 L848.15,232.0 L848.15,234.4 L846.65,234.4 L846.65,232.0 L844.8,232.0 Z" fill="#1a2a80"/>
<g fill="#1a2a80"><rect x="857.3000000000001" y="229.0" width="1.7" height="1.7"/><rect x="860.7" y="229.0" width="1.7" height="1.7"/><rect x="857.3000000000001" y="232.4" width="1.7" height="1.7"/><rect x="860.7" y="232.4" width="1.7" height="1.7"/></g><path d="M858.0500000000001,229.75 L861.65,233.35000000000002 M861.65,229.75 L858.0500000000001,233.35000000000002" stroke="#3848b0" stroke-width="0.9"/>
</svg></body></html>
